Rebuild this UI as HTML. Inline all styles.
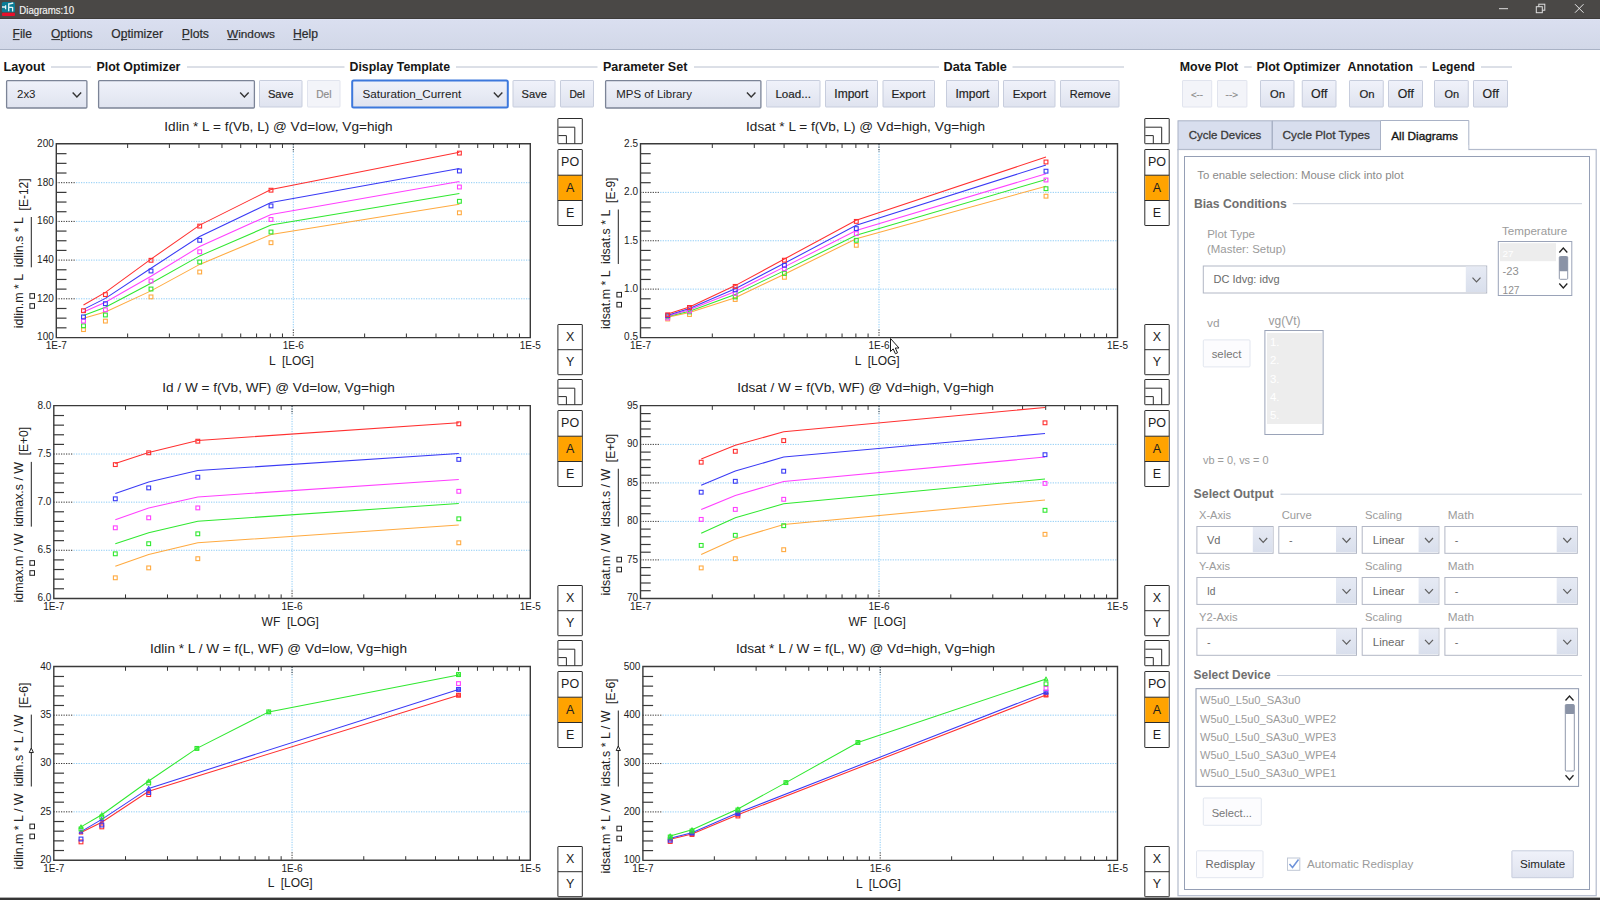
<!DOCTYPE html>
<html><head><meta charset="utf-8"><style>
html,body{margin:0;padding:0;}
body{width:1600px;height:900px;overflow:hidden;position:relative;background:#fff;font-family:"Liberation Sans", sans-serif;}
</style></head><body>
<svg width="1600" height="900" style="position:absolute;left:0;top:0" font-family="Liberation Sans, sans-serif"><defs><linearGradient id="gbtn" x1="0" y1="0" x2="0" y2="1"><stop offset="0" stop-color="#f0f2fa"/><stop offset="1" stop-color="#dfe3ef"/></linearGradient><linearGradient id="gmenu" x1="0" y1="0" x2="0" y2="1"><stop offset="0" stop-color="#dadff0"/><stop offset="1" stop-color="#d2d8e8"/></linearGradient><linearGradient id="gcbtn" x1="0" y1="0" x2="0" y2="1"><stop offset="0" stop-color="#e6eaf4"/><stop offset="1" stop-color="#d9dfec"/></linearGradient></defs><rect x="0" y="0" width="1600" height="18.5" fill="#4a4846"/><rect x="0" y="18" width="1600" height="1" fill="#3e3c3a"/><rect x="1.8" y="2" width="13.2" height="10.3" rx="1.5" fill="#0b7c95"/><rect x="2" y="12.8" width="13" height="3.2" rx="1" fill="#e8102c"/><path d="M2,7 H5 M5.6,5.2 V9.3 M8.7,3.2 V11.2 M8.7,4.2 L13.2,3 M9,7.3 H12.5 M12.6,7 V11.4" stroke="#e8f4f6" stroke-width="1.3" fill="none"/><text x="19.30" y="13.8" font-size="10.4" fill="#f4f4f4" textLength="54.70" lengthAdjust="spacingAndGlyphs" stroke="#f4f4f4" stroke-width="0.15">Diagrams:10</text><line x1="1499" y1="8.7" x2="1508" y2="8.7" stroke="#dedede" stroke-width="1"/><rect x="1538.8" y="4.2" width="6" height="6" fill="none" stroke="#dedede" stroke-width="1"/><rect x="1536.3" y="6.7" width="6" height="6" fill="#4a4846" stroke="#dedede" stroke-width="1"/><path d="M1575,4.2 L1583.5,12.7 M1583.5,4.2 L1575,12.7" stroke="#e8e8e8" stroke-width="1"/><rect x="0" y="19" width="1600" height="30" fill="url(#gmenu)"/><rect x="0" y="19" width="1600" height="1" fill="#dfe4f3"/><rect x="0" y="49" width="1600" height="1" fill="#a9b2c5"/><text x="12.50" y="38.10" font-size="12.10" fill="#2b2b2b" xml:space="preserve" stroke="#2b2b2b" stroke-width="0.2">File</text><line x1="12.8" y1="39.6" x2="19.6" y2="39.6" stroke="#2b2b2b" stroke-width="1"/><text x="51.00" y="38.10" font-size="12.04" fill="#2b2b2b" xml:space="preserve" stroke="#2b2b2b" stroke-width="0.2">Options</text><line x1="51.3" y1="39.6" x2="60.1" y2="39.6" stroke="#2b2b2b" stroke-width="1"/><text x="111.25" y="38.10" font-size="12.10" fill="#2b2b2b" xml:space="preserve" stroke="#2b2b2b" stroke-width="0.2">Optimizer</text><line x1="121.0" y1="39.6" x2="127.1" y2="39.6" stroke="#2b2b2b" stroke-width="1"/><text x="181.75" y="38.10" font-size="12.26" fill="#2b2b2b" xml:space="preserve" stroke="#2b2b2b" stroke-width="0.2">Plots</text><line x1="182.1" y1="39.6" x2="189.6" y2="39.6" stroke="#2b2b2b" stroke-width="1"/><text x="227.00" y="38.10" font-size="11.83" fill="#2b2b2b" xml:space="preserve" stroke="#2b2b2b" stroke-width="0.2">Windows</text><line x1="227.3" y1="39.6" x2="237.9" y2="39.6" stroke="#2b2b2b" stroke-width="1"/><text x="293.00" y="38.10" font-size="12.15" fill="#2b2b2b" xml:space="preserve" stroke="#2b2b2b" stroke-width="0.2">Help</text><line x1="293.3" y1="39.6" x2="301.5" y2="39.6" stroke="#2b2b2b" stroke-width="1"/><text x="3.50" y="71.10" font-size="12.66" font-weight="bold" fill="#161616" xml:space="preserve">Layout</text><text x="96.50" y="71.10" font-size="12.39" font-weight="bold" fill="#161616" xml:space="preserve">Plot Optimizer</text><text x="349.50" y="71.10" font-size="12.33" font-weight="bold" fill="#161616" xml:space="preserve">Display Template</text><text x="603.00" y="71.10" font-size="12.56" font-weight="bold" fill="#161616" xml:space="preserve">Parameter Set</text><text x="943.50" y="71.10" font-size="12.74" font-weight="bold" fill="#161616" xml:space="preserve">Data Table</text><text x="1179.80" y="71.10" font-size="12.39" font-weight="bold" fill="#161616" xml:space="preserve">Move Plot</text><text x="1256.50" y="71.10" font-size="12.39" font-weight="bold" fill="#161616" xml:space="preserve">Plot Optimizer</text><text x="1347.50" y="71.10" font-size="12.41" font-weight="bold" fill="#161616" xml:space="preserve">Annotation</text><text x="1432.00" y="71.10" font-size="12.09" font-weight="bold" fill="#161616" xml:space="preserve">Legend</text><line x1="51" y1="67" x2="91" y2="67" stroke="#b9c0cf" stroke-width="1"/><line x1="187" y1="67" x2="344.5" y2="67" stroke="#b9c0cf" stroke-width="1"/><line x1="456" y1="67" x2="597.5" y2="67" stroke="#b9c0cf" stroke-width="1"/><line x1="694" y1="67" x2="939" y2="67" stroke="#b9c0cf" stroke-width="1"/><line x1="1012.5" y1="67" x2="1124" y2="67" stroke="#b9c0cf" stroke-width="1"/><line x1="1244.2" y1="67" x2="1251.7" y2="67" stroke="#b9c0cf" stroke-width="1"/><line x1="1419.5" y1="67" x2="1427" y2="67" stroke="#b9c0cf" stroke-width="1"/><line x1="1481" y1="67" x2="1512" y2="67" stroke="#b9c0cf" stroke-width="1"/><rect x="6.6" y="80.6" width="80.3" height="27.4" rx="1" fill="url(#gbtn)" stroke="#7c8497" stroke-width="1.3"/><text x="17.00" y="97.90" font-size="11.48" fill="#222" xml:space="preserve">2x3</text><polyline points="72.65,92.45 76.90,96.95 81.15,92.45" fill="none" stroke="#333" stroke-width="1.4"/><rect x="98.6" y="80.6" width="155.8" height="27.4" rx="1" fill="url(#gbtn)" stroke="#7c8497" stroke-width="1.3"/><polyline points="240.15,92.45 244.40,96.95 248.65,92.45" fill="none" stroke="#333" stroke-width="1.4"/><rect x="352.2" y="80.5" width="155.6" height="27" rx="1.5" fill="url(#gbtn)" stroke="#3d78dc" stroke-width="2"/><text x="362.50" y="97.90" font-size="11.69" fill="#222" xml:space="preserve">Saturation_Current</text><polyline points="493.85,92.45 498.10,96.95 502.35,92.45" fill="none" stroke="#333" stroke-width="1.4"/><rect x="605.6" y="80.6" width="155.3" height="27.4" rx="1" fill="url(#gbtn)" stroke="#7c8497" stroke-width="1.3"/><text x="616.25" y="97.90" font-size="11.45" fill="#222" xml:space="preserve">MPS of Library</text><polyline points="746.95,92.45 751.20,96.95 755.45,92.45" fill="none" stroke="#333" stroke-width="1.4"/><rect x="259.5" y="80.5" width="42.5" height="26.5" rx="0.6" fill="url(#gbtn)" stroke="#c7cddd" stroke-width="1"/><text x="267.90" y="98.10" font-size="11.23" fill="#1e1e1e" xml:space="preserve" stroke="#1e1e1e" stroke-width="0.18">Save</text><rect x="307.5" y="80.5" width="32.5" height="26.5" rx="0.6" fill="#f3f4f9" stroke="#e1e4ee" stroke-width="1"/><text x="316.30" y="98.10" font-size="10.13" fill="#8c8c8c" xml:space="preserve" stroke="#8c8c8c" stroke-width="0.18">Del</text><rect x="513.0" y="80.5" width="42.0" height="26.5" rx="0.6" fill="url(#gbtn)" stroke="#c7cddd" stroke-width="1"/><text x="521.60" y="98.10" font-size="11.10" fill="#1e1e1e" xml:space="preserve" stroke="#1e1e1e" stroke-width="0.18">Save</text><rect x="560.5" y="80.5" width="33" height="26.5" rx="0.6" fill="url(#gbtn)" stroke="#c7cddd" stroke-width="1"/><text x="569.40" y="98.10" font-size="10.33" fill="#1e1e1e" xml:space="preserve" stroke="#1e1e1e" stroke-width="0.18">Del</text><rect x="766.5" y="80.5" width="53.5" height="26.5" rx="0.6" fill="url(#gbtn)" stroke="#c7cddd" stroke-width="1"/><text x="775.40" y="98.10" font-size="11.64" fill="#1e1e1e" xml:space="preserve" stroke="#1e1e1e" stroke-width="0.18">Load...</text><rect x="825.5" y="80.5" width="52" height="26.5" rx="0.6" fill="url(#gbtn)" stroke="#c7cddd" stroke-width="1"/><text x="834.30" y="98.10" font-size="12.03" fill="#1e1e1e" xml:space="preserve" stroke="#1e1e1e" stroke-width="0.18">Import</text><rect x="883.0" y="80.5" width="51.5" height="26.5" rx="0.6" fill="url(#gbtn)" stroke="#c7cddd" stroke-width="1"/><text x="891.50" y="98.10" font-size="11.76" fill="#1e1e1e" xml:space="preserve" stroke="#1e1e1e" stroke-width="0.18">Export</text><rect x="946.5" y="80.5" width="52" height="26.5" rx="0.6" fill="url(#gbtn)" stroke="#c7cddd" stroke-width="1"/><text x="955.40" y="98.10" font-size="12.03" fill="#1e1e1e" xml:space="preserve" stroke="#1e1e1e" stroke-width="0.18">Import</text><rect x="1003.5" y="80.5" width="51.5" height="26.5" rx="0.6" fill="url(#gbtn)" stroke="#c7cddd" stroke-width="1"/><text x="1012.80" y="98.10" font-size="11.56" fill="#1e1e1e" xml:space="preserve" stroke="#1e1e1e" stroke-width="0.18">Export</text><rect x="1060.5" y="80.5" width="58.5" height="26.5" rx="0.6" fill="url(#gbtn)" stroke="#c7cddd" stroke-width="1"/><text x="1069.75" y="98.10" font-size="10.97" fill="#1e1e1e" xml:space="preserve" stroke="#1e1e1e" stroke-width="0.18">Remove</text><rect x="1182.5" y="80.5" width="29.200000000000045" height="26.5" rx="0.6" fill="#f3f4f9" stroke="#e1e4ee" stroke-width="1"/><text x="1191.00" y="98.10" font-size="9.60" fill="#8c8c8c" xml:space="preserve" stroke="#8c8c8c" stroke-width="0.18">&lt;--</text><rect x="1217.5" y="80.5" width="29.40000000000009" height="26.5" rx="0.6" fill="#f3f4f9" stroke="#e1e4ee" stroke-width="1"/><text x="1225.60" y="98.10" font-size="9.92" fill="#8c8c8c" xml:space="preserve" stroke="#8c8c8c" stroke-width="0.18">--&gt;</text><rect x="1260.5" y="80.5" width="33.5" height="26.5" rx="0.6" fill="url(#gbtn)" stroke="#c7cddd" stroke-width="1"/><text x="1270.00" y="98.10" font-size="11.24" fill="#1e1e1e" xml:space="preserve" stroke="#1e1e1e" stroke-width="0.18">On</text><rect x="1302.25" y="80.5" width="33.75" height="26.5" rx="0.6" fill="url(#gbtn)" stroke="#c7cddd" stroke-width="1"/><text x="1311.00" y="98.10" font-size="12.44" fill="#1e1e1e" xml:space="preserve" stroke="#1e1e1e" stroke-width="0.18">Off</text><rect x="1349.5" y="80.5" width="33.75" height="26.5" rx="0.6" fill="url(#gbtn)" stroke="#c7cddd" stroke-width="1"/><text x="1359.40" y="98.10" font-size="11.32" fill="#1e1e1e" xml:space="preserve" stroke="#1e1e1e" stroke-width="0.18">On</text><rect x="1388.5" y="80.5" width="34" height="26.5" rx="0.6" fill="url(#gbtn)" stroke="#c7cddd" stroke-width="1"/><text x="1397.80" y="98.10" font-size="12.29" fill="#1e1e1e" xml:space="preserve" stroke="#1e1e1e" stroke-width="0.18">Off</text><rect x="1434.5" y="80.5" width="33.75" height="26.5" rx="0.6" fill="url(#gbtn)" stroke="#c7cddd" stroke-width="1"/><text x="1444.40" y="98.10" font-size="10.94" fill="#1e1e1e" xml:space="preserve" stroke="#1e1e1e" stroke-width="0.18">On</text><rect x="1473.5" y="80.5" width="34" height="26.5" rx="0.6" fill="url(#gbtn)" stroke="#c7cddd" stroke-width="1"/><text x="1482.60" y="98.10" font-size="12.37" fill="#1e1e1e" xml:space="preserve" stroke="#1e1e1e" stroke-width="0.18">Off</text><rect x="557.9" y="118.5" width="24.4" height="25.2" rx="0.4" fill="#fff" stroke="#2c2c2c" stroke-width="1"/><path d="M558.4,127.2 H574.8 V143.7 M558.4,135.6 H566.4 V143.7" fill="none" stroke="#2c2c2c" stroke-width="1"/><rect x="557.9" y="149.5" width="24.4" height="76" rx="0.4" fill="#fff" stroke="#2c2c2c" stroke-width="1"/><rect x="558.4" y="175.2" width="23.4" height="25.3" fill="#ffa300"/><line x1="557.9" y1="175.2" x2="582.3" y2="175.2" stroke="#2c2c2c" stroke-width="1"/><line x1="557.9" y1="200.5" x2="582.3" y2="200.5" stroke="#2c2c2c" stroke-width="1"/><text x="561.07" y="166.20" font-size="12.50" fill="#1e1e1e" xml:space="preserve">PO</text><text x="565.93" y="191.70" font-size="12.50" fill="#1e1e1e" xml:space="preserve">A</text><text x="565.93" y="217.00" font-size="12.50" fill="#1e1e1e" xml:space="preserve">E</text><rect x="557.9" y="324.5" width="24.4" height="50.2" rx="0.4" fill="#fff" stroke="#2c2c2c" stroke-width="1"/><line x1="557.9" y1="349.7" x2="582.3" y2="349.7" stroke="#2c2c2c" stroke-width="1"/><text x="565.93" y="340.60" font-size="12.50" fill="#1e1e1e" xml:space="preserve">X</text><text x="565.93" y="365.60" font-size="12.50" fill="#1e1e1e" xml:space="preserve">Y</text><rect x="557.9" y="379.5" width="24.4" height="25.2" rx="0.4" fill="#fff" stroke="#2c2c2c" stroke-width="1"/><path d="M558.4,388.2 H574.8 V404.7 M558.4,396.6 H566.4 V404.7" fill="none" stroke="#2c2c2c" stroke-width="1"/><rect x="557.9" y="410.5" width="24.4" height="76" rx="0.4" fill="#fff" stroke="#2c2c2c" stroke-width="1"/><rect x="558.4" y="436.2" width="23.4" height="25.3" fill="#ffa300"/><line x1="557.9" y1="436.2" x2="582.3" y2="436.2" stroke="#2c2c2c" stroke-width="1"/><line x1="557.9" y1="461.5" x2="582.3" y2="461.5" stroke="#2c2c2c" stroke-width="1"/><text x="561.07" y="427.20" font-size="12.50" fill="#1e1e1e" xml:space="preserve">PO</text><text x="565.93" y="452.70" font-size="12.50" fill="#1e1e1e" xml:space="preserve">A</text><text x="565.93" y="478.00" font-size="12.50" fill="#1e1e1e" xml:space="preserve">E</text><rect x="557.9" y="585.5" width="24.4" height="50.2" rx="0.4" fill="#fff" stroke="#2c2c2c" stroke-width="1"/><line x1="557.9" y1="610.7" x2="582.3" y2="610.7" stroke="#2c2c2c" stroke-width="1"/><text x="565.93" y="601.60" font-size="12.50" fill="#1e1e1e" xml:space="preserve">X</text><text x="565.93" y="626.60" font-size="12.50" fill="#1e1e1e" xml:space="preserve">Y</text><rect x="557.9" y="640.5" width="24.4" height="25.2" rx="0.4" fill="#fff" stroke="#2c2c2c" stroke-width="1"/><path d="M558.4,649.2 H574.8 V665.7 M558.4,657.6 H566.4 V665.7" fill="none" stroke="#2c2c2c" stroke-width="1"/><rect x="557.9" y="671.5" width="24.4" height="76" rx="0.4" fill="#fff" stroke="#2c2c2c" stroke-width="1"/><rect x="558.4" y="697.2" width="23.4" height="25.3" fill="#ffa300"/><line x1="557.9" y1="697.2" x2="582.3" y2="697.2" stroke="#2c2c2c" stroke-width="1"/><line x1="557.9" y1="722.5" x2="582.3" y2="722.5" stroke="#2c2c2c" stroke-width="1"/><text x="561.07" y="688.20" font-size="12.50" fill="#1e1e1e" xml:space="preserve">PO</text><text x="565.93" y="713.70" font-size="12.50" fill="#1e1e1e" xml:space="preserve">A</text><text x="565.93" y="739.00" font-size="12.50" fill="#1e1e1e" xml:space="preserve">E</text><rect x="557.9" y="846.5" width="24.4" height="50.2" rx="0.4" fill="#fff" stroke="#2c2c2c" stroke-width="1"/><line x1="557.9" y1="871.7" x2="582.3" y2="871.7" stroke="#2c2c2c" stroke-width="1"/><text x="565.93" y="862.60" font-size="12.50" fill="#1e1e1e" xml:space="preserve">X</text><text x="565.93" y="887.60" font-size="12.50" fill="#1e1e1e" xml:space="preserve">Y</text><rect x="1144.8" y="118.5" width="24.4" height="25.2" rx="0.4" fill="#fff" stroke="#2c2c2c" stroke-width="1"/><path d="M1145.3,127.2 H1161.7 V143.7 M1145.3,135.6 H1153.3 V143.7" fill="none" stroke="#2c2c2c" stroke-width="1"/><rect x="1144.8" y="149.5" width="24.4" height="76" rx="0.4" fill="#fff" stroke="#2c2c2c" stroke-width="1"/><rect x="1145.3" y="175.2" width="23.4" height="25.3" fill="#ffa300"/><line x1="1144.8" y1="175.2" x2="1169.2" y2="175.2" stroke="#2c2c2c" stroke-width="1"/><line x1="1144.8" y1="200.5" x2="1169.2" y2="200.5" stroke="#2c2c2c" stroke-width="1"/><text x="1147.97" y="166.20" font-size="12.50" fill="#1e1e1e" xml:space="preserve">PO</text><text x="1152.83" y="191.70" font-size="12.50" fill="#1e1e1e" xml:space="preserve">A</text><text x="1152.83" y="217.00" font-size="12.50" fill="#1e1e1e" xml:space="preserve">E</text><rect x="1144.8" y="324.5" width="24.4" height="50.2" rx="0.4" fill="#fff" stroke="#2c2c2c" stroke-width="1"/><line x1="1144.8" y1="349.7" x2="1169.2" y2="349.7" stroke="#2c2c2c" stroke-width="1"/><text x="1152.83" y="340.60" font-size="12.50" fill="#1e1e1e" xml:space="preserve">X</text><text x="1152.83" y="365.60" font-size="12.50" fill="#1e1e1e" xml:space="preserve">Y</text><rect x="1144.8" y="379.5" width="24.4" height="25.2" rx="0.4" fill="#fff" stroke="#2c2c2c" stroke-width="1"/><path d="M1145.3,388.2 H1161.7 V404.7 M1145.3,396.6 H1153.3 V404.7" fill="none" stroke="#2c2c2c" stroke-width="1"/><rect x="1144.8" y="410.5" width="24.4" height="76" rx="0.4" fill="#fff" stroke="#2c2c2c" stroke-width="1"/><rect x="1145.3" y="436.2" width="23.4" height="25.3" fill="#ffa300"/><line x1="1144.8" y1="436.2" x2="1169.2" y2="436.2" stroke="#2c2c2c" stroke-width="1"/><line x1="1144.8" y1="461.5" x2="1169.2" y2="461.5" stroke="#2c2c2c" stroke-width="1"/><text x="1147.97" y="427.20" font-size="12.50" fill="#1e1e1e" xml:space="preserve">PO</text><text x="1152.83" y="452.70" font-size="12.50" fill="#1e1e1e" xml:space="preserve">A</text><text x="1152.83" y="478.00" font-size="12.50" fill="#1e1e1e" xml:space="preserve">E</text><rect x="1144.8" y="585.5" width="24.4" height="50.2" rx="0.4" fill="#fff" stroke="#2c2c2c" stroke-width="1"/><line x1="1144.8" y1="610.7" x2="1169.2" y2="610.7" stroke="#2c2c2c" stroke-width="1"/><text x="1152.83" y="601.60" font-size="12.50" fill="#1e1e1e" xml:space="preserve">X</text><text x="1152.83" y="626.60" font-size="12.50" fill="#1e1e1e" xml:space="preserve">Y</text><rect x="1144.8" y="640.5" width="24.4" height="25.2" rx="0.4" fill="#fff" stroke="#2c2c2c" stroke-width="1"/><path d="M1145.3,649.2 H1161.7 V665.7 M1145.3,657.6 H1153.3 V665.7" fill="none" stroke="#2c2c2c" stroke-width="1"/><rect x="1144.8" y="671.5" width="24.4" height="76" rx="0.4" fill="#fff" stroke="#2c2c2c" stroke-width="1"/><rect x="1145.3" y="697.2" width="23.4" height="25.3" fill="#ffa300"/><line x1="1144.8" y1="697.2" x2="1169.2" y2="697.2" stroke="#2c2c2c" stroke-width="1"/><line x1="1144.8" y1="722.5" x2="1169.2" y2="722.5" stroke="#2c2c2c" stroke-width="1"/><text x="1147.97" y="688.20" font-size="12.50" fill="#1e1e1e" xml:space="preserve">PO</text><text x="1152.83" y="713.70" font-size="12.50" fill="#1e1e1e" xml:space="preserve">A</text><text x="1152.83" y="739.00" font-size="12.50" fill="#1e1e1e" xml:space="preserve">E</text><rect x="1144.8" y="846.5" width="24.4" height="50.2" rx="0.4" fill="#fff" stroke="#2c2c2c" stroke-width="1"/><line x1="1144.8" y1="871.7" x2="1169.2" y2="871.7" stroke="#2c2c2c" stroke-width="1"/><text x="1152.83" y="862.60" font-size="12.50" fill="#1e1e1e" xml:space="preserve">X</text><text x="1152.83" y="887.60" font-size="12.50" fill="#1e1e1e" xml:space="preserve">Y</text><rect x="1178" y="120.8" width="94" height="29" fill="#d8deee" stroke="#a9b2c6" stroke-width="1"/><rect x="1272.5" y="120.8" width="108" height="29" fill="#d8deee" stroke="#a9b2c6" stroke-width="1"/><text x="1188.70" y="138.60" font-size="11.46" fill="#3a3a3a" xml:space="preserve" stroke="#3a3a3a" stroke-width="0.3">Cycle Devices</text><text x="1282.50" y="138.60" font-size="11.78" fill="#3a3a3a" xml:space="preserve" stroke="#3a3a3a" stroke-width="0.3">Cycle Plot Types</text><rect x="1178" y="149.5" width="418.2" height="746.2" fill="#fff" stroke="#b3bbcc" stroke-width="1.2"/><path d="M1380.5,150 V120.5 H1468.8 V150" fill="#fff" stroke="#a9b2c6" stroke-width="1"/><rect x="1381.2" y="145" width="87" height="6" fill="#fff"/><text x="1391.20" y="139.50" font-size="11.79" fill="#151515" xml:space="preserve" stroke="#151515" stroke-width="0.35">All Diagrams</text><rect x="1184.5" y="156.5" width="405" height="733" fill="#fff" stroke="#959fb5" stroke-width="1"/><text x="1197.20" y="179.40" font-size="11.40" fill="#8a8a8a" xml:space="preserve">To enable selection: Mouse click into plot</text><text x="1193.90" y="207.60" font-size="12.19" font-weight="bold" fill="#707070" xml:space="preserve">Bias Conditions</text><line x1="1292.8" y1="203.7" x2="1582" y2="203.7" stroke="#c9cfdb" stroke-width="1"/><text x="1207.20" y="238.30" font-size="11.52" fill="#9b9b9b" xml:space="preserve">Plot Type</text><text x="1207.00" y="252.80" font-size="11.46" fill="#9b9b9b" xml:space="preserve">(Master: Setup)</text><text x="1502.00" y="234.70" font-size="11.61" fill="#9b9b9b" xml:space="preserve">Temperature</text><rect x="1203.3" y="266.0" width="283.4000000000001" height="27.0" fill="#fff" stroke="#b2b7c5" stroke-width="1"/><rect x="1465.8" y="266.5" width="20.40000000000009" height="25.5" fill="url(#gcbtn)"/><text x="1213.60" y="283.30" font-size="11.01" fill="#6a6a6a" xml:space="preserve">DC Idvg: idvg</text><polyline points="1472.50,277.60 1476.50,281.90 1480.50,277.60" fill="none" stroke="#606060" stroke-width="1.2"/><rect x="1498.3" y="241.5" width="73.5" height="54" fill="#fff" stroke="#9aa3b8" stroke-width="1"/><rect x="1500" y="243.2" width="56" height="18" fill="#ededed"/><text x="1502.50" y="257.00" font-size="9.89" fill="#ffffff" xml:space="preserve">27</text><text x="1502.50" y="275.00" font-size="11.14" fill="#8f8f8f" xml:space="preserve">-23</text><svg x="1498" y="242" width="60" height="53" overflow="hidden"><text x="4.50" y="51.50" font-size="10.19" fill="#8f8f8f" xml:space="preserve">127</text></svg><polyline points="1559.30,252.45 1563.30,247.95 1567.30,252.45" fill="none" stroke="#222" stroke-width="1.3"/><rect x="1559.3" y="256.5" width="8.4" height="22.8" rx="1" fill="#fff" stroke="#8f98ab" stroke-width="1"/><rect x="1559.3" y="256.5" width="8.4" height="14.8" rx="1" fill="#8a93a6"/><polyline points="1559.30,283.55 1563.30,288.05 1567.30,283.55" fill="none" stroke="#222" stroke-width="1.3"/><text x="1207.00" y="327.20" font-size="11.84" fill="#9b9b9b" xml:space="preserve">vd</text><rect x="1203.3" y="339.9" width="46.7" height="27" rx="1" fill="#fcfcfe" stroke="#e2e6ef" stroke-width="1"/><text x="1211.70" y="357.80" font-size="11.37" fill="#777" xml:space="preserve">select</text><text x="1268.60" y="325.00" font-size="12.00" fill="#9b9b9b" xml:space="preserve">vg(Vt)</text><rect x="1264.9" y="330.5" width="58.2" height="104" fill="#fff" stroke="#9aa3b8" stroke-width="1"/><rect x="1267" y="333" width="55" height="91" fill="#ededed"/><text x="1270.00" y="346.00" font-size="11.39" fill="#ffffff" xml:space="preserve">1.</text><text x="1270.00" y="364.30" font-size="11.39" fill="#ffffff" xml:space="preserve">2.</text><text x="1270.00" y="382.60" font-size="11.39" fill="#ffffff" xml:space="preserve">3.</text><text x="1270.00" y="400.90" font-size="11.39" fill="#ffffff" xml:space="preserve">4.</text><text x="1270.00" y="419.20" font-size="11.39" fill="#ffffff" xml:space="preserve">5.</text><text x="1203.00" y="463.60" font-size="10.93" fill="#9b9b9b" xml:space="preserve">vb = 0, vs = 0</text><text x="1193.60" y="498.30" font-size="12.31" font-weight="bold" fill="#707070" xml:space="preserve">Select Output</text><line x1="1280.5" y1="494.2" x2="1582" y2="494.2" stroke="#c9cfdb" stroke-width="1"/><text x="1199.00" y="519.20" font-size="11.08" fill="#9b9b9b" xml:space="preserve">X-Axis</text><text x="1281.70" y="519.20" font-size="11.24" fill="#9b9b9b" xml:space="preserve">Curve</text><text x="1365.00" y="519.20" font-size="11.28" fill="#9b9b9b" xml:space="preserve">Scaling</text><text x="1447.80" y="519.20" font-size="11.79" fill="#9b9b9b" xml:space="preserve">Math</text><rect x="1196.9" y="526.5" width="76.19999999999982" height="26.799999999999955" fill="#fff" stroke="#b2b7c5" stroke-width="1"/><rect x="1252.8" y="527" width="19.799999999999955" height="25.299999999999955" fill="url(#gcbtn)"/><text x="1207.00" y="544.20" font-size="11.04" fill="#6a6a6a" xml:space="preserve">Vd</text><polyline points="1259.20,538.00 1263.20,542.30 1267.20,538.00" fill="none" stroke="#606060" stroke-width="1.2"/><rect x="1278.8" y="526.5" width="77.70000000000005" height="26.799999999999955" fill="#fff" stroke="#b2b7c5" stroke-width="1"/><rect x="1336" y="527" width="20" height="25.299999999999955" fill="url(#gcbtn)"/><text x="1288.90" y="544.20" font-size="10.81" fill="#6a6a6a" xml:space="preserve">-</text><polyline points="1342.50,538.00 1346.50,542.30 1350.50,538.00" fill="none" stroke="#606060" stroke-width="1.2"/><rect x="1362.2" y="526.5" width="76.70000000000005" height="26.799999999999955" fill="#fff" stroke="#b2b7c5" stroke-width="1"/><rect x="1418.6" y="527" width="19.800000000000182" height="25.299999999999955" fill="url(#gcbtn)"/><text x="1372.80" y="544.20" font-size="11.47" fill="#6a6a6a" xml:space="preserve">Linear</text><polyline points="1425.00,538.00 1429.00,542.30 1433.00,538.00" fill="none" stroke="#606060" stroke-width="1.2"/><rect x="1444.9" y="526.5" width="132.39999999999986" height="26.799999999999955" fill="#fff" stroke="#b2b7c5" stroke-width="1"/><rect x="1556.7" y="527" width="20.09999999999991" height="25.299999999999955" fill="url(#gcbtn)"/><text x="1454.70" y="544.20" font-size="10.81" fill="#6a6a6a" xml:space="preserve">-</text><polyline points="1563.25,538.00 1567.25,542.30 1571.25,538.00" fill="none" stroke="#606060" stroke-width="1.2"/><text x="1199.00" y="570.00" font-size="11.08" fill="#9b9b9b" xml:space="preserve">Y-Axis</text><text x="1365.00" y="570.00" font-size="11.28" fill="#9b9b9b" xml:space="preserve">Scaling</text><text x="1447.80" y="570.00" font-size="11.79" fill="#9b9b9b" xml:space="preserve">Math</text><rect x="1196.9" y="577.5" width="159.5999999999999" height="26.899999999999977" fill="#fff" stroke="#b2b7c5" stroke-width="1"/><rect x="1336" y="578" width="20" height="25.399999999999977" fill="url(#gcbtn)"/><text x="1207.00" y="595.00" font-size="10.19" fill="#6a6a6a" xml:space="preserve">Id</text><polyline points="1342.50,589.05 1346.50,593.35 1350.50,589.05" fill="none" stroke="#606060" stroke-width="1.2"/><rect x="1362.2" y="577.5" width="76.70000000000005" height="26.899999999999977" fill="#fff" stroke="#b2b7c5" stroke-width="1"/><rect x="1418.6" y="578" width="19.800000000000182" height="25.399999999999977" fill="url(#gcbtn)"/><text x="1372.80" y="595.00" font-size="11.47" fill="#6a6a6a" xml:space="preserve">Linear</text><polyline points="1425.00,589.05 1429.00,593.35 1433.00,589.05" fill="none" stroke="#606060" stroke-width="1.2"/><rect x="1444.9" y="577.5" width="132.39999999999986" height="26.899999999999977" fill="#fff" stroke="#b2b7c5" stroke-width="1"/><rect x="1556.7" y="578" width="20.09999999999991" height="25.399999999999977" fill="url(#gcbtn)"/><text x="1454.70" y="595.00" font-size="10.81" fill="#6a6a6a" xml:space="preserve">-</text><polyline points="1563.25,589.05 1567.25,593.35 1571.25,589.05" fill="none" stroke="#606060" stroke-width="1.2"/><text x="1199.00" y="621.10" font-size="11.18" fill="#9b9b9b" xml:space="preserve">Y2-Axis</text><text x="1365.00" y="621.10" font-size="11.28" fill="#9b9b9b" xml:space="preserve">Scaling</text><text x="1447.80" y="621.10" font-size="11.79" fill="#9b9b9b" xml:space="preserve">Math</text><rect x="1196.9" y="628.3" width="159.5999999999999" height="27.0" fill="#fff" stroke="#b2b7c5" stroke-width="1"/><rect x="1336" y="628.8" width="20" height="25.5" fill="url(#gcbtn)"/><text x="1207.00" y="645.60" font-size="10.81" fill="#6a6a6a" xml:space="preserve">-</text><polyline points="1342.50,639.90 1346.50,644.20 1350.50,639.90" fill="none" stroke="#606060" stroke-width="1.2"/><rect x="1362.2" y="628.3" width="76.70000000000005" height="27.0" fill="#fff" stroke="#b2b7c5" stroke-width="1"/><rect x="1418.6" y="628.8" width="19.800000000000182" height="25.5" fill="url(#gcbtn)"/><text x="1372.80" y="645.60" font-size="11.47" fill="#6a6a6a" xml:space="preserve">Linear</text><polyline points="1425.00,639.90 1429.00,644.20 1433.00,639.90" fill="none" stroke="#606060" stroke-width="1.2"/><rect x="1444.9" y="628.3" width="132.39999999999986" height="27.0" fill="#fff" stroke="#b2b7c5" stroke-width="1"/><rect x="1556.7" y="628.8" width="20.09999999999991" height="25.5" fill="url(#gcbtn)"/><text x="1454.70" y="645.60" font-size="10.81" fill="#6a6a6a" xml:space="preserve">-</text><polyline points="1563.25,639.90 1567.25,644.20 1571.25,639.90" fill="none" stroke="#606060" stroke-width="1.2"/><text x="1193.60" y="679.40" font-size="11.94" font-weight="bold" fill="#707070" xml:space="preserve">Select Device</text><line x1="1277" y1="675.5" x2="1582" y2="675.5" stroke="#c9cfdb" stroke-width="1"/><rect x="1196" y="688.7" width="382.6" height="97.7" fill="#fff" stroke="#8d97ad" stroke-width="1"/><text x="1200.10" y="704.40" font-size="11.22" fill="#9b9b9b" xml:space="preserve">W5u0_L5u0_SA3u0</text><text x="1200.10" y="722.65" font-size="11.02" fill="#9b9b9b" xml:space="preserve">W5u0_L5u0_SA3u0_WPE2</text><text x="1200.10" y="740.90" font-size="11.02" fill="#9b9b9b" xml:space="preserve">W5u0_L5u0_SA3u0_WPE3</text><text x="1200.10" y="759.15" font-size="11.02" fill="#9b9b9b" xml:space="preserve">W5u0_L5u0_SA3u0_WPE4</text><text x="1200.10" y="777.40" font-size="11.02" fill="#9b9b9b" xml:space="preserve">W5u0_L5u0_SA3u0_WPE1</text><polyline points="1565.50,700.55 1569.50,696.05 1573.50,700.55" fill="none" stroke="#222" stroke-width="1.3"/><rect x="1565.3" y="704.5" width="9" height="66.5" rx="1" fill="#fff" stroke="#8f98ab" stroke-width="1"/><rect x="1565.3" y="704.5" width="9" height="9.5" rx="1" fill="#8a93a6"/><polyline points="1565.50,775.25 1569.50,779.75 1573.50,775.25" fill="none" stroke="#222" stroke-width="1.3"/><rect x="1203.3" y="798" width="58" height="27.3" rx="1" fill="#fcfcfe" stroke="#e2e6ef" stroke-width="1"/><text x="1211.70" y="816.50" font-size="11.15" fill="#777" xml:space="preserve">Select...</text><rect x="1196.5" y="850.8" width="66.5" height="26.9" rx="1" fill="#fcfcfe" stroke="#e2e6ef" stroke-width="1"/><text x="1205.50" y="868.40" font-size="11.27" fill="#6a6a6a" xml:space="preserve">Redisplay</text><rect x="1287.5" y="858" width="12.3" height="12.3" fill="#fff" stroke="#c0c7d5" stroke-width="1"/><polyline points="1289.5,864 1292.5,867.5 1298.5,859.5" fill="none" stroke="#6f93da" stroke-width="1.5"/><text x="1307.00" y="868.40" font-size="11.66" fill="#9b9b9b" xml:space="preserve">Automatic Redisplay</text><rect x="1511.9" y="850.8" width="61.4" height="26.9" rx="0.5" fill="url(#gbtn)" stroke="#c7cddd" stroke-width="1"/><text x="1520.00" y="868.40" font-size="11.62" fill="#222" xml:space="preserve">Simulate</text><rect x="0" y="897.6" width="1600" height="2.4" fill="#363636"/><line x1="56" y1="327.82" x2="66.5" y2="327.82" stroke="#3a3a3a" stroke-width="1.2"/><line x1="56" y1="318.15" x2="66.5" y2="318.15" stroke="#3a3a3a" stroke-width="1.2"/><line x1="56" y1="308.48" x2="66.5" y2="308.48" stroke="#3a3a3a" stroke-width="1.2"/><text x="53.8" y="340.40" text-anchor="end" font-size="10" fill="#222">100</text><line x1="76" y1="298.80" x2="530" y2="298.80" stroke="#8ccbf5" stroke-width="1" stroke-dasharray="1.25,1.25"/><line x1="56" y1="298.80" x2="76" y2="298.80" stroke="#333" stroke-width="1" stroke-dasharray="1.25,1.25"/><line x1="56" y1="289.12" x2="66.5" y2="289.12" stroke="#3a3a3a" stroke-width="1.2"/><line x1="56" y1="279.45" x2="66.5" y2="279.45" stroke="#3a3a3a" stroke-width="1.2"/><line x1="56" y1="269.78" x2="66.5" y2="269.78" stroke="#3a3a3a" stroke-width="1.2"/><text x="53.8" y="301.70" text-anchor="end" font-size="10" fill="#222">120</text><line x1="76" y1="260.10" x2="530" y2="260.10" stroke="#8ccbf5" stroke-width="1" stroke-dasharray="1.25,1.25"/><line x1="56" y1="260.10" x2="76" y2="260.10" stroke="#333" stroke-width="1" stroke-dasharray="1.25,1.25"/><line x1="56" y1="250.43" x2="66.5" y2="250.43" stroke="#3a3a3a" stroke-width="1.2"/><line x1="56" y1="240.75" x2="66.5" y2="240.75" stroke="#3a3a3a" stroke-width="1.2"/><line x1="56" y1="231.08" x2="66.5" y2="231.08" stroke="#3a3a3a" stroke-width="1.2"/><text x="53.8" y="263.00" text-anchor="end" font-size="10" fill="#222">140</text><line x1="76" y1="221.40" x2="530" y2="221.40" stroke="#8ccbf5" stroke-width="1" stroke-dasharray="1.25,1.25"/><line x1="56" y1="221.40" x2="76" y2="221.40" stroke="#333" stroke-width="1" stroke-dasharray="1.25,1.25"/><line x1="56" y1="211.72" x2="66.5" y2="211.72" stroke="#3a3a3a" stroke-width="1.2"/><line x1="56" y1="202.05" x2="66.5" y2="202.05" stroke="#3a3a3a" stroke-width="1.2"/><line x1="56" y1="192.38" x2="66.5" y2="192.38" stroke="#3a3a3a" stroke-width="1.2"/><text x="53.8" y="224.30" text-anchor="end" font-size="10" fill="#222">160</text><line x1="76" y1="182.70" x2="530" y2="182.70" stroke="#8ccbf5" stroke-width="1" stroke-dasharray="1.25,1.25"/><line x1="56" y1="182.70" x2="76" y2="182.70" stroke="#333" stroke-width="1" stroke-dasharray="1.25,1.25"/><line x1="56" y1="173.02" x2="66.5" y2="173.02" stroke="#3a3a3a" stroke-width="1.2"/><line x1="56" y1="163.35" x2="66.5" y2="163.35" stroke="#3a3a3a" stroke-width="1.2"/><line x1="56" y1="153.67" x2="66.5" y2="153.67" stroke="#3a3a3a" stroke-width="1.2"/><text x="53.8" y="185.60" text-anchor="end" font-size="10" fill="#222">180</text><text x="53.8" y="146.90" text-anchor="end" font-size="10" fill="#222">200</text><line x1="293.30" y1="144" x2="293.30" y2="329.5" stroke="#8ccbf5" stroke-width="1" stroke-dasharray="1.25,1.25"/><line x1="293.30" y1="329.5" x2="293.30" y2="337.5" stroke="#333" stroke-width="1" stroke-dasharray="1.25,1.25"/><line x1="293.30" y1="144" x2="293.30" y2="152" stroke="#333" stroke-width="1" stroke-dasharray="1.25,1.25"/><line x1="127.64" y1="144" x2="127.64" y2="148" stroke="#333" stroke-width="1"/><line x1="127.64" y1="333.5" x2="127.64" y2="337.5" stroke="#333" stroke-width="1"/><line x1="169.38" y1="144" x2="169.38" y2="148" stroke="#333" stroke-width="1"/><line x1="169.38" y1="333.5" x2="169.38" y2="337.5" stroke="#333" stroke-width="1"/><line x1="198.99" y1="144" x2="198.99" y2="148" stroke="#333" stroke-width="1"/><line x1="198.99" y1="333.5" x2="198.99" y2="337.5" stroke="#333" stroke-width="1"/><line x1="221.96" y1="144" x2="221.96" y2="148" stroke="#333" stroke-width="1"/><line x1="221.96" y1="333.5" x2="221.96" y2="337.5" stroke="#333" stroke-width="1"/><line x1="240.72" y1="144" x2="240.72" y2="148" stroke="#333" stroke-width="1"/><line x1="240.72" y1="333.5" x2="240.72" y2="337.5" stroke="#333" stroke-width="1"/><line x1="256.59" y1="144" x2="256.59" y2="148" stroke="#333" stroke-width="1"/><line x1="256.59" y1="333.5" x2="256.59" y2="337.5" stroke="#333" stroke-width="1"/><line x1="270.33" y1="144" x2="270.33" y2="148" stroke="#333" stroke-width="1"/><line x1="270.33" y1="333.5" x2="270.33" y2="337.5" stroke="#333" stroke-width="1"/><line x1="282.46" y1="144" x2="282.46" y2="148" stroke="#333" stroke-width="1"/><line x1="282.46" y1="333.5" x2="282.46" y2="337.5" stroke="#333" stroke-width="1"/><line x1="364.64" y1="144" x2="364.64" y2="148" stroke="#333" stroke-width="1"/><line x1="364.64" y1="333.5" x2="364.64" y2="337.5" stroke="#333" stroke-width="1"/><line x1="406.38" y1="144" x2="406.38" y2="148" stroke="#333" stroke-width="1"/><line x1="406.38" y1="333.5" x2="406.38" y2="337.5" stroke="#333" stroke-width="1"/><line x1="435.99" y1="144" x2="435.99" y2="148" stroke="#333" stroke-width="1"/><line x1="435.99" y1="333.5" x2="435.99" y2="337.5" stroke="#333" stroke-width="1"/><line x1="458.96" y1="144" x2="458.96" y2="148" stroke="#333" stroke-width="1"/><line x1="458.96" y1="333.5" x2="458.96" y2="337.5" stroke="#333" stroke-width="1"/><line x1="477.72" y1="144" x2="477.72" y2="148" stroke="#333" stroke-width="1"/><line x1="477.72" y1="333.5" x2="477.72" y2="337.5" stroke="#333" stroke-width="1"/><line x1="493.59" y1="144" x2="493.59" y2="148" stroke="#333" stroke-width="1"/><line x1="493.59" y1="333.5" x2="493.59" y2="337.5" stroke="#333" stroke-width="1"/><line x1="507.33" y1="144" x2="507.33" y2="148" stroke="#333" stroke-width="1"/><line x1="507.33" y1="333.5" x2="507.33" y2="337.5" stroke="#333" stroke-width="1"/><line x1="519.46" y1="144" x2="519.46" y2="148" stroke="#333" stroke-width="1"/><line x1="519.46" y1="333.5" x2="519.46" y2="337.5" stroke="#333" stroke-width="1"/><text x="56.30" y="349.30" text-anchor="middle" font-size="10" fill="#222">1E-7</text><text x="293.30" y="349.30" text-anchor="middle" font-size="10" fill="#222">1E-6</text><text x="530.30" y="349.30" text-anchor="middle" font-size="10" fill="#222">1E-5</text><path d="M56.3,143.75 H530.3 V337.6 H56.3 Z" fill="none" stroke="#3a3a3a" stroke-width="1.4"/><text x="278.5" y="131" text-anchor="middle" font-size="13.6" fill="#222">Idlin * L = f(Vb, L) @ Vd=low, Vg=high</text><text x="291.50" y="364.70" text-anchor="middle" font-size="12" fill="#222" xml:space="preserve">L  [LOG]</text><text transform="translate(23,328.19) rotate(-90)" font-size="12.4" fill="#222" xml:space="preserve">idlin.m * L  idlin.s * L<tspan dy="5" font-size="12">  [E-12]</tspan></text><rect x="29.90" y="293.66" width="4.6" height="4.6" fill="none" stroke="#222" stroke-width="1"/><rect x="29.90" y="303.66" width="4.6" height="4.6" fill="none" stroke="#222" stroke-width="1"/><line x1="31.3" y1="267.31" x2="31.3" y2="217.00" stroke="#222" stroke-width="1"/><polyline points="83.5,318.3 105.4,312.0 151.0,290.9 199.7,264.4 271.0,234.6 459.4,204.2" fill="none" stroke="#ffaa40" stroke-width="1.05"/><rect x="81.6" y="327.7" width="3.8" height="3.8" fill="none" stroke="#ffaa40" stroke-width="1.1"/><rect x="103.5" y="319.2" width="3.8" height="3.8" fill="none" stroke="#ffaa40" stroke-width="1.1"/><rect x="149.1" y="295.0" width="3.8" height="3.8" fill="none" stroke="#ffaa40" stroke-width="1.1"/><rect x="197.8" y="270.1" width="3.8" height="3.8" fill="none" stroke="#ffaa40" stroke-width="1.1"/><rect x="269.1" y="240.8" width="3.8" height="3.8" fill="none" stroke="#ffaa40" stroke-width="1.1"/><rect x="457.5" y="210.9" width="3.8" height="3.8" fill="none" stroke="#ffaa40" stroke-width="1.1"/><polyline points="83.5,315.4 105.4,307.3 151.0,283.3 199.7,255.9 271.0,225.1 459.4,193.5" fill="none" stroke="#30e830" stroke-width="1.05"/><rect x="81.6" y="323.9" width="3.8" height="3.8" fill="none" stroke="#30e830" stroke-width="1.1"/><rect x="103.5" y="313.1" width="3.8" height="3.8" fill="none" stroke="#30e830" stroke-width="1.1"/><rect x="149.1" y="287.1" width="3.8" height="3.8" fill="none" stroke="#30e830" stroke-width="1.1"/><rect x="197.8" y="260.1" width="3.8" height="3.8" fill="none" stroke="#30e830" stroke-width="1.1"/><rect x="269.1" y="230.1" width="3.8" height="3.8" fill="none" stroke="#30e830" stroke-width="1.1"/><rect x="457.5" y="199.4" width="3.8" height="3.8" fill="none" stroke="#30e830" stroke-width="1.1"/><polyline points="83.5,312.0 105.4,302.2 151.0,276.3 199.7,246.5 271.0,214.4 459.4,181.6" fill="none" stroke="#ff40ff" stroke-width="1.05"/><rect x="81.6" y="319.2" width="3.8" height="3.8" fill="none" stroke="#ff40ff" stroke-width="1.1"/><rect x="103.5" y="307.9" width="3.8" height="3.8" fill="none" stroke="#ff40ff" stroke-width="1.1"/><rect x="149.1" y="279.1" width="3.8" height="3.8" fill="none" stroke="#ff40ff" stroke-width="1.1"/><rect x="197.8" y="249.9" width="3.8" height="3.8" fill="none" stroke="#ff40ff" stroke-width="1.1"/><rect x="269.1" y="217.6" width="3.8" height="3.8" fill="none" stroke="#ff40ff" stroke-width="1.1"/><rect x="457.5" y="185.1" width="3.8" height="3.8" fill="none" stroke="#ff40ff" stroke-width="1.1"/><polyline points="83.5,309.4 105.4,298.4 151.0,268.2 199.7,236.5 271.0,202.5 459.4,168.5" fill="none" stroke="#3a3af5" stroke-width="1.05"/><rect x="81.6" y="315.0" width="3.8" height="3.8" fill="none" stroke="#3a3af5" stroke-width="1.1"/><rect x="103.5" y="301.8" width="3.8" height="3.8" fill="none" stroke="#3a3af5" stroke-width="1.1"/><rect x="149.1" y="269.1" width="3.8" height="3.8" fill="none" stroke="#3a3af5" stroke-width="1.1"/><rect x="197.8" y="238.4" width="3.8" height="3.8" fill="none" stroke="#3a3af5" stroke-width="1.1"/><rect x="269.1" y="204.0" width="3.8" height="3.8" fill="none" stroke="#3a3af5" stroke-width="1.1"/><rect x="457.5" y="169.1" width="3.8" height="3.8" fill="none" stroke="#3a3af5" stroke-width="1.1"/><polyline points="83.5,305.0 105.4,292.4 151.0,259.1 199.7,225.1 271.0,189.5 459.4,152.2" fill="none" stroke="#ff3030" stroke-width="1.05"/><rect x="81.6" y="308.8" width="3.8" height="3.8" fill="none" stroke="#ff3030" stroke-width="1.1"/><rect x="103.5" y="292.7" width="3.8" height="3.8" fill="none" stroke="#ff3030" stroke-width="1.1"/><rect x="149.1" y="258.4" width="3.8" height="3.8" fill="none" stroke="#ff3030" stroke-width="1.1"/><rect x="197.8" y="224.2" width="3.8" height="3.8" fill="none" stroke="#ff3030" stroke-width="1.1"/><rect x="269.1" y="188.3" width="3.8" height="3.8" fill="none" stroke="#ff3030" stroke-width="1.1"/><rect x="457.5" y="151.2" width="3.8" height="3.8" fill="none" stroke="#ff3030" stroke-width="1.1"/><line x1="640.2" y1="327.82" x2="650.7" y2="327.82" stroke="#3a3a3a" stroke-width="1.2"/><line x1="640.2" y1="318.15" x2="650.7" y2="318.15" stroke="#3a3a3a" stroke-width="1.2"/><line x1="640.2" y1="308.48" x2="650.7" y2="308.48" stroke="#3a3a3a" stroke-width="1.2"/><line x1="640.2" y1="298.80" x2="650.7" y2="298.80" stroke="#3a3a3a" stroke-width="1.2"/><text x="638.0" y="340.40" text-anchor="end" font-size="10" fill="#222">0.5</text><line x1="660.2" y1="289.12" x2="1117.2" y2="289.12" stroke="#8ccbf5" stroke-width="1" stroke-dasharray="1.25,1.25"/><line x1="640.2" y1="289.12" x2="660.2" y2="289.12" stroke="#333" stroke-width="1" stroke-dasharray="1.25,1.25"/><line x1="640.2" y1="279.45" x2="650.7" y2="279.45" stroke="#3a3a3a" stroke-width="1.2"/><line x1="640.2" y1="269.77" x2="650.7" y2="269.77" stroke="#3a3a3a" stroke-width="1.2"/><line x1="640.2" y1="260.10" x2="650.7" y2="260.10" stroke="#3a3a3a" stroke-width="1.2"/><line x1="640.2" y1="250.43" x2="650.7" y2="250.43" stroke="#3a3a3a" stroke-width="1.2"/><text x="638.0" y="292.02" text-anchor="end" font-size="10" fill="#222">1.0</text><line x1="660.2" y1="240.75" x2="1117.2" y2="240.75" stroke="#8ccbf5" stroke-width="1" stroke-dasharray="1.25,1.25"/><line x1="640.2" y1="240.75" x2="660.2" y2="240.75" stroke="#333" stroke-width="1" stroke-dasharray="1.25,1.25"/><line x1="640.2" y1="231.07" x2="650.7" y2="231.07" stroke="#3a3a3a" stroke-width="1.2"/><line x1="640.2" y1="221.40" x2="650.7" y2="221.40" stroke="#3a3a3a" stroke-width="1.2"/><line x1="640.2" y1="211.72" x2="650.7" y2="211.72" stroke="#3a3a3a" stroke-width="1.2"/><line x1="640.2" y1="202.05" x2="650.7" y2="202.05" stroke="#3a3a3a" stroke-width="1.2"/><text x="638.0" y="243.65" text-anchor="end" font-size="10" fill="#222">1.5</text><line x1="660.2" y1="192.38" x2="1117.2" y2="192.38" stroke="#8ccbf5" stroke-width="1" stroke-dasharray="1.25,1.25"/><line x1="640.2" y1="192.38" x2="660.2" y2="192.38" stroke="#333" stroke-width="1" stroke-dasharray="1.25,1.25"/><line x1="640.2" y1="182.70" x2="650.7" y2="182.70" stroke="#3a3a3a" stroke-width="1.2"/><line x1="640.2" y1="173.03" x2="650.7" y2="173.03" stroke="#3a3a3a" stroke-width="1.2"/><line x1="640.2" y1="163.35" x2="650.7" y2="163.35" stroke="#3a3a3a" stroke-width="1.2"/><line x1="640.2" y1="153.68" x2="650.7" y2="153.68" stroke="#3a3a3a" stroke-width="1.2"/><text x="638.0" y="195.28" text-anchor="end" font-size="10" fill="#222">2.0</text><text x="638.0" y="146.90" text-anchor="end" font-size="10" fill="#222">2.5</text><line x1="879.00" y1="144" x2="879.00" y2="329.5" stroke="#8ccbf5" stroke-width="1" stroke-dasharray="1.25,1.25"/><line x1="879.00" y1="329.5" x2="879.00" y2="337.5" stroke="#333" stroke-width="1" stroke-dasharray="1.25,1.25"/><line x1="879.00" y1="144" x2="879.00" y2="152" stroke="#333" stroke-width="1" stroke-dasharray="1.25,1.25"/><line x1="712.30" y1="144" x2="712.30" y2="148" stroke="#333" stroke-width="1"/><line x1="712.30" y1="333.5" x2="712.30" y2="337.5" stroke="#333" stroke-width="1"/><line x1="754.29" y1="144" x2="754.29" y2="148" stroke="#333" stroke-width="1"/><line x1="754.29" y1="333.5" x2="754.29" y2="337.5" stroke="#333" stroke-width="1"/><line x1="784.09" y1="144" x2="784.09" y2="148" stroke="#333" stroke-width="1"/><line x1="784.09" y1="333.5" x2="784.09" y2="337.5" stroke="#333" stroke-width="1"/><line x1="807.20" y1="144" x2="807.20" y2="148" stroke="#333" stroke-width="1"/><line x1="807.20" y1="333.5" x2="807.20" y2="337.5" stroke="#333" stroke-width="1"/><line x1="826.09" y1="144" x2="826.09" y2="148" stroke="#333" stroke-width="1"/><line x1="826.09" y1="333.5" x2="826.09" y2="337.5" stroke="#333" stroke-width="1"/><line x1="842.06" y1="144" x2="842.06" y2="148" stroke="#333" stroke-width="1"/><line x1="842.06" y1="333.5" x2="842.06" y2="337.5" stroke="#333" stroke-width="1"/><line x1="855.89" y1="144" x2="855.89" y2="148" stroke="#333" stroke-width="1"/><line x1="855.89" y1="333.5" x2="855.89" y2="337.5" stroke="#333" stroke-width="1"/><line x1="868.09" y1="144" x2="868.09" y2="148" stroke="#333" stroke-width="1"/><line x1="868.09" y1="333.5" x2="868.09" y2="337.5" stroke="#333" stroke-width="1"/><line x1="950.80" y1="144" x2="950.80" y2="148" stroke="#333" stroke-width="1"/><line x1="950.80" y1="333.5" x2="950.80" y2="337.5" stroke="#333" stroke-width="1"/><line x1="992.79" y1="144" x2="992.79" y2="148" stroke="#333" stroke-width="1"/><line x1="992.79" y1="333.5" x2="992.79" y2="337.5" stroke="#333" stroke-width="1"/><line x1="1022.59" y1="144" x2="1022.59" y2="148" stroke="#333" stroke-width="1"/><line x1="1022.59" y1="333.5" x2="1022.59" y2="337.5" stroke="#333" stroke-width="1"/><line x1="1045.70" y1="144" x2="1045.70" y2="148" stroke="#333" stroke-width="1"/><line x1="1045.70" y1="333.5" x2="1045.70" y2="337.5" stroke="#333" stroke-width="1"/><line x1="1064.59" y1="144" x2="1064.59" y2="148" stroke="#333" stroke-width="1"/><line x1="1064.59" y1="333.5" x2="1064.59" y2="337.5" stroke="#333" stroke-width="1"/><line x1="1080.56" y1="144" x2="1080.56" y2="148" stroke="#333" stroke-width="1"/><line x1="1080.56" y1="333.5" x2="1080.56" y2="337.5" stroke="#333" stroke-width="1"/><line x1="1094.39" y1="144" x2="1094.39" y2="148" stroke="#333" stroke-width="1"/><line x1="1094.39" y1="333.5" x2="1094.39" y2="337.5" stroke="#333" stroke-width="1"/><line x1="1106.59" y1="144" x2="1106.59" y2="148" stroke="#333" stroke-width="1"/><line x1="1106.59" y1="333.5" x2="1106.59" y2="337.5" stroke="#333" stroke-width="1"/><text x="640.50" y="349.30" text-anchor="middle" font-size="10" fill="#222">1E-7</text><text x="879.00" y="349.30" text-anchor="middle" font-size="10" fill="#222">1E-6</text><text x="1117.50" y="349.30" text-anchor="middle" font-size="10" fill="#222">1E-5</text><path d="M640.5,143.75 H1117.5 V337.6 H640.5 Z" fill="none" stroke="#3a3a3a" stroke-width="1.4"/><text x="865.5" y="131" text-anchor="middle" font-size="13.6" fill="#222">Idsat * L = f(Vb, L) @ Vd=high, Vg=high</text><text x="877.20" y="364.70" text-anchor="middle" font-size="12" fill="#222" xml:space="preserve">L  [LOG]</text><text transform="translate(610,328.98) rotate(-90)" font-size="12.4" fill="#222" xml:space="preserve">idsat.m * L  idsat.s * L<tspan dy="5" font-size="12">  [E-9]</tspan></text><rect x="616.90" y="292.39" width="4.6" height="4.6" fill="none" stroke="#222" stroke-width="1"/><rect x="616.90" y="302.39" width="4.6" height="4.6" fill="none" stroke="#222" stroke-width="1"/><line x1="618.3" y1="263.98" x2="618.3" y2="209.53" stroke="#222" stroke-width="1"/><polyline points="667.7,317.2 689.5,312.5 735.2,297.7 784.4,274.2 856.2,238.8 1046.0,186.2" fill="none" stroke="#ffaa40" stroke-width="1.05"/><rect x="665.8" y="317.1" width="3.8" height="3.8" fill="none" stroke="#ffaa40" stroke-width="1.1"/><rect x="687.6" y="312.6" width="3.8" height="3.8" fill="none" stroke="#ffaa40" stroke-width="1.1"/><rect x="733.3" y="297.6" width="3.8" height="3.8" fill="none" stroke="#ffaa40" stroke-width="1.1"/><rect x="782.5" y="275.4" width="3.8" height="3.8" fill="none" stroke="#ffaa40" stroke-width="1.1"/><rect x="854.4" y="243.4" width="3.8" height="3.8" fill="none" stroke="#ffaa40" stroke-width="1.1"/><rect x="1044.1" y="194.3" width="3.8" height="3.8" fill="none" stroke="#ffaa40" stroke-width="1.1"/><polyline points="667.7,316.4 689.5,311.2 735.2,294.5 784.4,270.6 856.2,235.2 1046.0,179.5" fill="none" stroke="#30e830" stroke-width="1.05"/><rect x="665.8" y="315.0" width="3.8" height="3.8" fill="none" stroke="#30e830" stroke-width="1.1"/><rect x="687.6" y="310.0" width="3.8" height="3.8" fill="none" stroke="#30e830" stroke-width="1.1"/><rect x="733.3" y="295.0" width="3.8" height="3.8" fill="none" stroke="#30e830" stroke-width="1.1"/><rect x="782.5" y="271.5" width="3.8" height="3.8" fill="none" stroke="#30e830" stroke-width="1.1"/><rect x="854.4" y="238.4" width="3.8" height="3.8" fill="none" stroke="#30e830" stroke-width="1.1"/><rect x="1044.1" y="186.8" width="3.8" height="3.8" fill="none" stroke="#30e830" stroke-width="1.1"/><polyline points="667.7,316.0 689.5,309.8 735.2,291.4 784.4,266.9 856.2,230.5 1046.0,173.8" fill="none" stroke="#ff40ff" stroke-width="1.05"/><rect x="665.8" y="316.1" width="3.8" height="3.8" fill="none" stroke="#ff40ff" stroke-width="1.1"/><rect x="687.6" y="309.1" width="3.8" height="3.8" fill="none" stroke="#ff40ff" stroke-width="1.1"/><rect x="733.3" y="291.5" width="3.8" height="3.8" fill="none" stroke="#ff40ff" stroke-width="1.1"/><rect x="782.5" y="266.9" width="3.8" height="3.8" fill="none" stroke="#ff40ff" stroke-width="1.1"/><rect x="854.4" y="231.7" width="3.8" height="3.8" fill="none" stroke="#ff40ff" stroke-width="1.1"/><rect x="1044.1" y="178.1" width="3.8" height="3.8" fill="none" stroke="#ff40ff" stroke-width="1.1"/><polyline points="667.7,315.2 689.5,308.6 735.2,288.8 784.4,263.3 856.2,225.3 1046.0,165.0" fill="none" stroke="#3a3af5" stroke-width="1.05"/><rect x="665.8" y="313.7" width="3.8" height="3.8" fill="none" stroke="#3a3af5" stroke-width="1.1"/><rect x="687.6" y="305.9" width="3.8" height="3.8" fill="none" stroke="#3a3af5" stroke-width="1.1"/><rect x="733.3" y="287.9" width="3.8" height="3.8" fill="none" stroke="#3a3af5" stroke-width="1.1"/><rect x="782.5" y="263.4" width="3.8" height="3.8" fill="none" stroke="#3a3af5" stroke-width="1.1"/><rect x="854.4" y="226.7" width="3.8" height="3.8" fill="none" stroke="#3a3af5" stroke-width="1.1"/><rect x="1044.1" y="169.3" width="3.8" height="3.8" fill="none" stroke="#3a3af5" stroke-width="1.1"/><polyline points="667.7,314.0 689.5,307.0 735.2,285.6 784.4,259.0 856.2,220.3 1046.0,157.0" fill="none" stroke="#ff3030" stroke-width="1.05"/><rect x="665.8" y="312.9" width="3.8" height="3.8" fill="none" stroke="#ff3030" stroke-width="1.1"/><rect x="687.6" y="305.6" width="3.8" height="3.8" fill="none" stroke="#ff3030" stroke-width="1.1"/><rect x="733.3" y="284.5" width="3.8" height="3.8" fill="none" stroke="#ff3030" stroke-width="1.1"/><rect x="782.5" y="258.3" width="3.8" height="3.8" fill="none" stroke="#ff3030" stroke-width="1.1"/><rect x="854.4" y="219.5" width="3.8" height="3.8" fill="none" stroke="#ff3030" stroke-width="1.1"/><rect x="1044.1" y="160.1" width="3.8" height="3.8" fill="none" stroke="#ff3030" stroke-width="1.1"/><line x1="53.5" y1="588.77" x2="64.0" y2="588.77" stroke="#3a3a3a" stroke-width="1.2"/><line x1="53.5" y1="579.15" x2="64.0" y2="579.15" stroke="#3a3a3a" stroke-width="1.2"/><line x1="53.5" y1="569.52" x2="64.0" y2="569.52" stroke="#3a3a3a" stroke-width="1.2"/><line x1="53.5" y1="559.90" x2="64.0" y2="559.90" stroke="#3a3a3a" stroke-width="1.2"/><text x="51.3" y="601.30" text-anchor="end" font-size="10" fill="#222">6.0</text><line x1="73.5" y1="550.27" x2="530" y2="550.27" stroke="#8ccbf5" stroke-width="1" stroke-dasharray="1.25,1.25"/><line x1="53.5" y1="550.27" x2="73.5" y2="550.27" stroke="#333" stroke-width="1" stroke-dasharray="1.25,1.25"/><line x1="53.5" y1="540.65" x2="64.0" y2="540.65" stroke="#3a3a3a" stroke-width="1.2"/><line x1="53.5" y1="531.02" x2="64.0" y2="531.02" stroke="#3a3a3a" stroke-width="1.2"/><line x1="53.5" y1="521.40" x2="64.0" y2="521.40" stroke="#3a3a3a" stroke-width="1.2"/><line x1="53.5" y1="511.77" x2="64.0" y2="511.77" stroke="#3a3a3a" stroke-width="1.2"/><text x="51.3" y="553.17" text-anchor="end" font-size="10" fill="#222">6.5</text><line x1="73.5" y1="502.15" x2="530" y2="502.15" stroke="#8ccbf5" stroke-width="1" stroke-dasharray="1.25,1.25"/><line x1="53.5" y1="502.15" x2="73.5" y2="502.15" stroke="#333" stroke-width="1" stroke-dasharray="1.25,1.25"/><line x1="53.5" y1="492.52" x2="64.0" y2="492.52" stroke="#3a3a3a" stroke-width="1.2"/><line x1="53.5" y1="482.90" x2="64.0" y2="482.90" stroke="#3a3a3a" stroke-width="1.2"/><line x1="53.5" y1="473.27" x2="64.0" y2="473.27" stroke="#3a3a3a" stroke-width="1.2"/><line x1="53.5" y1="463.65" x2="64.0" y2="463.65" stroke="#3a3a3a" stroke-width="1.2"/><text x="51.3" y="505.05" text-anchor="end" font-size="10" fill="#222">7.0</text><line x1="73.5" y1="454.02" x2="530" y2="454.02" stroke="#8ccbf5" stroke-width="1" stroke-dasharray="1.25,1.25"/><line x1="53.5" y1="454.02" x2="73.5" y2="454.02" stroke="#333" stroke-width="1" stroke-dasharray="1.25,1.25"/><line x1="53.5" y1="444.40" x2="64.0" y2="444.40" stroke="#3a3a3a" stroke-width="1.2"/><line x1="53.5" y1="434.77" x2="64.0" y2="434.77" stroke="#3a3a3a" stroke-width="1.2"/><line x1="53.5" y1="425.15" x2="64.0" y2="425.15" stroke="#3a3a3a" stroke-width="1.2"/><line x1="53.5" y1="415.52" x2="64.0" y2="415.52" stroke="#3a3a3a" stroke-width="1.2"/><text x="51.3" y="456.92" text-anchor="end" font-size="10" fill="#222">7.5</text><text x="51.3" y="408.80" text-anchor="end" font-size="10" fill="#222">8.0</text><line x1="292.05" y1="405.9" x2="292.05" y2="590.4" stroke="#8ccbf5" stroke-width="1" stroke-dasharray="1.25,1.25"/><line x1="292.05" y1="590.4" x2="292.05" y2="598.4" stroke="#333" stroke-width="1" stroke-dasharray="1.25,1.25"/><line x1="292.05" y1="405.9" x2="292.05" y2="413.9" stroke="#333" stroke-width="1" stroke-dasharray="1.25,1.25"/><line x1="125.52" y1="405.9" x2="125.52" y2="409.9" stroke="#333" stroke-width="1"/><line x1="125.52" y1="594.4" x2="125.52" y2="598.4" stroke="#333" stroke-width="1"/><line x1="167.47" y1="405.9" x2="167.47" y2="409.9" stroke="#333" stroke-width="1"/><line x1="167.47" y1="594.4" x2="167.47" y2="598.4" stroke="#333" stroke-width="1"/><line x1="197.24" y1="405.9" x2="197.24" y2="409.9" stroke="#333" stroke-width="1"/><line x1="197.24" y1="594.4" x2="197.24" y2="598.4" stroke="#333" stroke-width="1"/><line x1="220.33" y1="405.9" x2="220.33" y2="409.9" stroke="#333" stroke-width="1"/><line x1="220.33" y1="594.4" x2="220.33" y2="598.4" stroke="#333" stroke-width="1"/><line x1="239.19" y1="405.9" x2="239.19" y2="409.9" stroke="#333" stroke-width="1"/><line x1="239.19" y1="594.4" x2="239.19" y2="598.4" stroke="#333" stroke-width="1"/><line x1="255.14" y1="405.9" x2="255.14" y2="409.9" stroke="#333" stroke-width="1"/><line x1="255.14" y1="594.4" x2="255.14" y2="598.4" stroke="#333" stroke-width="1"/><line x1="268.96" y1="405.9" x2="268.96" y2="409.9" stroke="#333" stroke-width="1"/><line x1="268.96" y1="594.4" x2="268.96" y2="598.4" stroke="#333" stroke-width="1"/><line x1="281.15" y1="405.9" x2="281.15" y2="409.9" stroke="#333" stroke-width="1"/><line x1="281.15" y1="594.4" x2="281.15" y2="598.4" stroke="#333" stroke-width="1"/><line x1="363.77" y1="405.9" x2="363.77" y2="409.9" stroke="#333" stroke-width="1"/><line x1="363.77" y1="594.4" x2="363.77" y2="598.4" stroke="#333" stroke-width="1"/><line x1="405.72" y1="405.9" x2="405.72" y2="409.9" stroke="#333" stroke-width="1"/><line x1="405.72" y1="594.4" x2="405.72" y2="598.4" stroke="#333" stroke-width="1"/><line x1="435.49" y1="405.9" x2="435.49" y2="409.9" stroke="#333" stroke-width="1"/><line x1="435.49" y1="594.4" x2="435.49" y2="598.4" stroke="#333" stroke-width="1"/><line x1="458.58" y1="405.9" x2="458.58" y2="409.9" stroke="#333" stroke-width="1"/><line x1="458.58" y1="594.4" x2="458.58" y2="598.4" stroke="#333" stroke-width="1"/><line x1="477.44" y1="405.9" x2="477.44" y2="409.9" stroke="#333" stroke-width="1"/><line x1="477.44" y1="594.4" x2="477.44" y2="598.4" stroke="#333" stroke-width="1"/><line x1="493.39" y1="405.9" x2="493.39" y2="409.9" stroke="#333" stroke-width="1"/><line x1="493.39" y1="594.4" x2="493.39" y2="598.4" stroke="#333" stroke-width="1"/><line x1="507.21" y1="405.9" x2="507.21" y2="409.9" stroke="#333" stroke-width="1"/><line x1="507.21" y1="594.4" x2="507.21" y2="598.4" stroke="#333" stroke-width="1"/><line x1="519.40" y1="405.9" x2="519.40" y2="409.9" stroke="#333" stroke-width="1"/><line x1="519.40" y1="594.4" x2="519.40" y2="598.4" stroke="#333" stroke-width="1"/><text x="53.80" y="610.20" text-anchor="middle" font-size="10" fill="#222">1E-7</text><text x="292.05" y="610.20" text-anchor="middle" font-size="10" fill="#222">1E-6</text><text x="530.30" y="610.20" text-anchor="middle" font-size="10" fill="#222">1E-5</text><path d="M53.8,405.65 H530.3 V598.5 H53.8 Z" fill="none" stroke="#3a3a3a" stroke-width="1.4"/><text x="278.5" y="392" text-anchor="middle" font-size="13.6" fill="#222">Id / W = f(Vb, WF) @ Vd=low, Vg=high</text><text x="290.25" y="625.60" text-anchor="middle" font-size="12" fill="#222" xml:space="preserve">WF  [LOG]</text><text transform="translate(23,602.43) rotate(-90)" font-size="12.4" fill="#222" xml:space="preserve">idmax.m / W  idmax.s / W<tspan dy="5" font-size="12">  [E+0]</tspan></text><rect x="29.90" y="560.69" width="4.6" height="4.6" fill="none" stroke="#222" stroke-width="1"/><rect x="29.90" y="570.69" width="4.6" height="4.6" fill="none" stroke="#222" stroke-width="1"/><line x1="31.3" y1="526.65" x2="31.3" y2="461.89" stroke="#222" stroke-width="1"/><polyline points="115.3,566.2 148.7,554.4 197.8,542.8 458.8,525.0" fill="none" stroke="#ffaa40" stroke-width="1.05"/><rect x="113.4" y="575.9" width="3.8" height="3.8" fill="none" stroke="#ffaa40" stroke-width="1.1"/><rect x="146.8" y="566.0" width="3.8" height="3.8" fill="none" stroke="#ffaa40" stroke-width="1.1"/><rect x="195.9" y="556.8" width="3.8" height="3.8" fill="none" stroke="#ffaa40" stroke-width="1.1"/><rect x="456.9" y="540.9" width="3.8" height="3.8" fill="none" stroke="#ffaa40" stroke-width="1.1"/><polyline points="115.3,543.7 148.7,532.8 197.8,521.2 458.8,503.4" fill="none" stroke="#30e830" stroke-width="1.05"/><rect x="113.4" y="551.9" width="3.8" height="3.8" fill="none" stroke="#30e830" stroke-width="1.1"/><rect x="146.8" y="541.8" width="3.8" height="3.8" fill="none" stroke="#30e830" stroke-width="1.1"/><rect x="195.9" y="531.9" width="3.8" height="3.8" fill="none" stroke="#30e830" stroke-width="1.1"/><rect x="456.9" y="516.9" width="3.8" height="3.8" fill="none" stroke="#30e830" stroke-width="1.1"/><polyline points="115.3,519.7 148.7,508.0 197.8,496.9 458.8,479.4" fill="none" stroke="#ff40ff" stroke-width="1.05"/><rect x="113.4" y="525.9" width="3.8" height="3.8" fill="none" stroke="#ff40ff" stroke-width="1.1"/><rect x="146.8" y="515.9" width="3.8" height="3.8" fill="none" stroke="#ff40ff" stroke-width="1.1"/><rect x="195.9" y="506.0" width="3.8" height="3.8" fill="none" stroke="#ff40ff" stroke-width="1.1"/><rect x="456.9" y="489.4" width="3.8" height="3.8" fill="none" stroke="#ff40ff" stroke-width="1.1"/><polyline points="115.3,493.5 148.7,481.9 197.8,470.6 458.8,453.4" fill="none" stroke="#3a3af5" stroke-width="1.05"/><rect x="113.4" y="496.9" width="3.8" height="3.8" fill="none" stroke="#3a3af5" stroke-width="1.1"/><rect x="146.8" y="486.0" width="3.8" height="3.8" fill="none" stroke="#3a3af5" stroke-width="1.1"/><rect x="195.9" y="475.3" width="3.8" height="3.8" fill="none" stroke="#3a3af5" stroke-width="1.1"/><rect x="456.9" y="457.5" width="3.8" height="3.8" fill="none" stroke="#3a3af5" stroke-width="1.1"/><polyline points="115.3,463.6 148.7,452.4 197.8,440.4 458.8,422.8" fill="none" stroke="#ff3030" stroke-width="1.05"/><rect x="113.4" y="462.7" width="3.8" height="3.8" fill="none" stroke="#ff3030" stroke-width="1.1"/><rect x="146.8" y="450.9" width="3.8" height="3.8" fill="none" stroke="#ff3030" stroke-width="1.1"/><rect x="195.9" y="439.3" width="3.8" height="3.8" fill="none" stroke="#ff3030" stroke-width="1.1"/><rect x="456.9" y="421.9" width="3.8" height="3.8" fill="none" stroke="#ff3030" stroke-width="1.1"/><line x1="640.2" y1="590.70" x2="650.7" y2="590.70" stroke="#3a3a3a" stroke-width="1.2"/><line x1="640.2" y1="583.00" x2="650.7" y2="583.00" stroke="#3a3a3a" stroke-width="1.2"/><line x1="640.2" y1="575.30" x2="650.7" y2="575.30" stroke="#3a3a3a" stroke-width="1.2"/><line x1="640.2" y1="567.60" x2="650.7" y2="567.60" stroke="#3a3a3a" stroke-width="1.2"/><text x="638.0" y="601.30" text-anchor="end" font-size="10" fill="#222">70</text><line x1="660.2" y1="559.90" x2="1117.2" y2="559.90" stroke="#8ccbf5" stroke-width="1" stroke-dasharray="1.25,1.25"/><line x1="640.2" y1="559.90" x2="660.2" y2="559.90" stroke="#333" stroke-width="1" stroke-dasharray="1.25,1.25"/><line x1="640.2" y1="552.20" x2="650.7" y2="552.20" stroke="#3a3a3a" stroke-width="1.2"/><line x1="640.2" y1="544.50" x2="650.7" y2="544.50" stroke="#3a3a3a" stroke-width="1.2"/><line x1="640.2" y1="536.80" x2="650.7" y2="536.80" stroke="#3a3a3a" stroke-width="1.2"/><line x1="640.2" y1="529.10" x2="650.7" y2="529.10" stroke="#3a3a3a" stroke-width="1.2"/><text x="638.0" y="562.80" text-anchor="end" font-size="10" fill="#222">75</text><line x1="660.2" y1="521.40" x2="1117.2" y2="521.40" stroke="#8ccbf5" stroke-width="1" stroke-dasharray="1.25,1.25"/><line x1="640.2" y1="521.40" x2="660.2" y2="521.40" stroke="#333" stroke-width="1" stroke-dasharray="1.25,1.25"/><line x1="640.2" y1="513.70" x2="650.7" y2="513.70" stroke="#3a3a3a" stroke-width="1.2"/><line x1="640.2" y1="506.00" x2="650.7" y2="506.00" stroke="#3a3a3a" stroke-width="1.2"/><line x1="640.2" y1="498.30" x2="650.7" y2="498.30" stroke="#3a3a3a" stroke-width="1.2"/><line x1="640.2" y1="490.60" x2="650.7" y2="490.60" stroke="#3a3a3a" stroke-width="1.2"/><text x="638.0" y="524.30" text-anchor="end" font-size="10" fill="#222">80</text><line x1="660.2" y1="482.90" x2="1117.2" y2="482.90" stroke="#8ccbf5" stroke-width="1" stroke-dasharray="1.25,1.25"/><line x1="640.2" y1="482.90" x2="660.2" y2="482.90" stroke="#333" stroke-width="1" stroke-dasharray="1.25,1.25"/><line x1="640.2" y1="475.20" x2="650.7" y2="475.20" stroke="#3a3a3a" stroke-width="1.2"/><line x1="640.2" y1="467.50" x2="650.7" y2="467.50" stroke="#3a3a3a" stroke-width="1.2"/><line x1="640.2" y1="459.80" x2="650.7" y2="459.80" stroke="#3a3a3a" stroke-width="1.2"/><line x1="640.2" y1="452.10" x2="650.7" y2="452.10" stroke="#3a3a3a" stroke-width="1.2"/><text x="638.0" y="485.80" text-anchor="end" font-size="10" fill="#222">85</text><line x1="660.2" y1="444.40" x2="1117.2" y2="444.40" stroke="#8ccbf5" stroke-width="1" stroke-dasharray="1.25,1.25"/><line x1="640.2" y1="444.40" x2="660.2" y2="444.40" stroke="#333" stroke-width="1" stroke-dasharray="1.25,1.25"/><line x1="640.2" y1="436.70" x2="650.7" y2="436.70" stroke="#3a3a3a" stroke-width="1.2"/><line x1="640.2" y1="429.00" x2="650.7" y2="429.00" stroke="#3a3a3a" stroke-width="1.2"/><line x1="640.2" y1="421.30" x2="650.7" y2="421.30" stroke="#3a3a3a" stroke-width="1.2"/><line x1="640.2" y1="413.60" x2="650.7" y2="413.60" stroke="#3a3a3a" stroke-width="1.2"/><text x="638.0" y="447.30" text-anchor="end" font-size="10" fill="#222">90</text><text x="638.0" y="408.80" text-anchor="end" font-size="10" fill="#222">95</text><line x1="879.00" y1="405.9" x2="879.00" y2="590.4" stroke="#8ccbf5" stroke-width="1" stroke-dasharray="1.25,1.25"/><line x1="879.00" y1="590.4" x2="879.00" y2="598.4" stroke="#333" stroke-width="1" stroke-dasharray="1.25,1.25"/><line x1="879.00" y1="405.9" x2="879.00" y2="413.9" stroke="#333" stroke-width="1" stroke-dasharray="1.25,1.25"/><line x1="712.30" y1="405.9" x2="712.30" y2="409.9" stroke="#333" stroke-width="1"/><line x1="712.30" y1="594.4" x2="712.30" y2="598.4" stroke="#333" stroke-width="1"/><line x1="754.29" y1="405.9" x2="754.29" y2="409.9" stroke="#333" stroke-width="1"/><line x1="754.29" y1="594.4" x2="754.29" y2="598.4" stroke="#333" stroke-width="1"/><line x1="784.09" y1="405.9" x2="784.09" y2="409.9" stroke="#333" stroke-width="1"/><line x1="784.09" y1="594.4" x2="784.09" y2="598.4" stroke="#333" stroke-width="1"/><line x1="807.20" y1="405.9" x2="807.20" y2="409.9" stroke="#333" stroke-width="1"/><line x1="807.20" y1="594.4" x2="807.20" y2="598.4" stroke="#333" stroke-width="1"/><line x1="826.09" y1="405.9" x2="826.09" y2="409.9" stroke="#333" stroke-width="1"/><line x1="826.09" y1="594.4" x2="826.09" y2="598.4" stroke="#333" stroke-width="1"/><line x1="842.06" y1="405.9" x2="842.06" y2="409.9" stroke="#333" stroke-width="1"/><line x1="842.06" y1="594.4" x2="842.06" y2="598.4" stroke="#333" stroke-width="1"/><line x1="855.89" y1="405.9" x2="855.89" y2="409.9" stroke="#333" stroke-width="1"/><line x1="855.89" y1="594.4" x2="855.89" y2="598.4" stroke="#333" stroke-width="1"/><line x1="868.09" y1="405.9" x2="868.09" y2="409.9" stroke="#333" stroke-width="1"/><line x1="868.09" y1="594.4" x2="868.09" y2="598.4" stroke="#333" stroke-width="1"/><line x1="950.80" y1="405.9" x2="950.80" y2="409.9" stroke="#333" stroke-width="1"/><line x1="950.80" y1="594.4" x2="950.80" y2="598.4" stroke="#333" stroke-width="1"/><line x1="992.79" y1="405.9" x2="992.79" y2="409.9" stroke="#333" stroke-width="1"/><line x1="992.79" y1="594.4" x2="992.79" y2="598.4" stroke="#333" stroke-width="1"/><line x1="1022.59" y1="405.9" x2="1022.59" y2="409.9" stroke="#333" stroke-width="1"/><line x1="1022.59" y1="594.4" x2="1022.59" y2="598.4" stroke="#333" stroke-width="1"/><line x1="1045.70" y1="405.9" x2="1045.70" y2="409.9" stroke="#333" stroke-width="1"/><line x1="1045.70" y1="594.4" x2="1045.70" y2="598.4" stroke="#333" stroke-width="1"/><line x1="1064.59" y1="405.9" x2="1064.59" y2="409.9" stroke="#333" stroke-width="1"/><line x1="1064.59" y1="594.4" x2="1064.59" y2="598.4" stroke="#333" stroke-width="1"/><line x1="1080.56" y1="405.9" x2="1080.56" y2="409.9" stroke="#333" stroke-width="1"/><line x1="1080.56" y1="594.4" x2="1080.56" y2="598.4" stroke="#333" stroke-width="1"/><line x1="1094.39" y1="405.9" x2="1094.39" y2="409.9" stroke="#333" stroke-width="1"/><line x1="1094.39" y1="594.4" x2="1094.39" y2="598.4" stroke="#333" stroke-width="1"/><line x1="1106.59" y1="405.9" x2="1106.59" y2="409.9" stroke="#333" stroke-width="1"/><line x1="1106.59" y1="594.4" x2="1106.59" y2="598.4" stroke="#333" stroke-width="1"/><text x="640.50" y="610.20" text-anchor="middle" font-size="10" fill="#222">1E-7</text><text x="879.00" y="610.20" text-anchor="middle" font-size="10" fill="#222">1E-6</text><text x="1117.50" y="610.20" text-anchor="middle" font-size="10" fill="#222">1E-5</text><path d="M640.5,405.65 H1117.5 V598.5 H640.5 Z" fill="none" stroke="#3a3a3a" stroke-width="1.4"/><text x="865.5" y="392" text-anchor="middle" font-size="13.6" fill="#222">Idsat / W = f(Vb, WF) @ Vd=high, Vg=high</text><text x="877.20" y="625.60" text-anchor="middle" font-size="12" fill="#222" xml:space="preserve">WF  [LOG]</text><text transform="translate(610,595.55) rotate(-90)" font-size="12.4" fill="#222" xml:space="preserve">idsat.m / W  idsat.s / W<tspan dy="5" font-size="12">  [E+0]</tspan></text><rect x="616.90" y="557.24" width="4.6" height="4.6" fill="none" stroke="#222" stroke-width="1"/><rect x="616.90" y="567.24" width="4.6" height="4.6" fill="none" stroke="#222" stroke-width="1"/><line x1="618.3" y1="526.65" x2="618.3" y2="468.77" stroke="#222" stroke-width="1"/><polyline points="701.2,554.4 735.3,539.0 783.7,524.4 1045.0,500.0" fill="none" stroke="#ffaa40" stroke-width="1.05"/><rect x="699.3" y="566.0" width="3.8" height="3.8" fill="none" stroke="#ffaa40" stroke-width="1.1"/><rect x="733.4" y="556.8" width="3.8" height="3.8" fill="none" stroke="#ffaa40" stroke-width="1.1"/><rect x="781.8" y="547.8" width="3.8" height="3.8" fill="none" stroke="#ffaa40" stroke-width="1.1"/><rect x="1043.1" y="532.4" width="3.8" height="3.8" fill="none" stroke="#ffaa40" stroke-width="1.1"/><polyline points="701.2,533.2 735.3,517.8 783.7,503.8 1045.0,479.0" fill="none" stroke="#30e830" stroke-width="1.05"/><rect x="699.3" y="543.5" width="3.8" height="3.8" fill="none" stroke="#30e830" stroke-width="1.1"/><rect x="733.4" y="533.4" width="3.8" height="3.8" fill="none" stroke="#30e830" stroke-width="1.1"/><rect x="781.8" y="523.8" width="3.8" height="3.8" fill="none" stroke="#30e830" stroke-width="1.1"/><rect x="1043.1" y="508.4" width="3.8" height="3.8" fill="none" stroke="#30e830" stroke-width="1.1"/><polyline points="701.2,509.6 735.3,495.4 783.7,481.5 1045.0,457.1" fill="none" stroke="#ff40ff" stroke-width="1.05"/><rect x="699.3" y="517.5" width="3.8" height="3.8" fill="none" stroke="#ff40ff" stroke-width="1.1"/><rect x="733.4" y="507.5" width="3.8" height="3.8" fill="none" stroke="#ff40ff" stroke-width="1.1"/><rect x="781.8" y="497.4" width="3.8" height="3.8" fill="none" stroke="#ff40ff" stroke-width="1.1"/><rect x="1043.1" y="481.5" width="3.8" height="3.8" fill="none" stroke="#ff40ff" stroke-width="1.1"/><polyline points="701.2,485.2 735.3,471.0 783.7,457.1 1045.0,433.5" fill="none" stroke="#3a3af5" stroke-width="1.05"/><rect x="699.3" y="490.3" width="3.8" height="3.8" fill="none" stroke="#3a3af5" stroke-width="1.1"/><rect x="733.4" y="479.4" width="3.8" height="3.8" fill="none" stroke="#3a3af5" stroke-width="1.1"/><rect x="781.8" y="469.3" width="3.8" height="3.8" fill="none" stroke="#3a3af5" stroke-width="1.1"/><rect x="1043.1" y="452.8" width="3.8" height="3.8" fill="none" stroke="#3a3af5" stroke-width="1.1"/><polyline points="701.2,459.0 735.3,445.3 783.7,431.8 1045.0,407.4" fill="none" stroke="#ff3030" stroke-width="1.05"/><rect x="699.3" y="460.3" width="3.8" height="3.8" fill="none" stroke="#ff3030" stroke-width="1.1"/><rect x="733.4" y="449.4" width="3.8" height="3.8" fill="none" stroke="#ff3030" stroke-width="1.1"/><rect x="781.8" y="438.7" width="3.8" height="3.8" fill="none" stroke="#ff3030" stroke-width="1.1"/><rect x="1043.1" y="420.9" width="3.8" height="3.8" fill="none" stroke="#ff3030" stroke-width="1.1"/><line x1="53.5" y1="850.53" x2="64.0" y2="850.53" stroke="#3a3a3a" stroke-width="1.2"/><line x1="53.5" y1="840.86" x2="64.0" y2="840.86" stroke="#3a3a3a" stroke-width="1.2"/><line x1="53.5" y1="831.19" x2="64.0" y2="831.19" stroke="#3a3a3a" stroke-width="1.2"/><line x1="53.5" y1="821.52" x2="64.0" y2="821.52" stroke="#3a3a3a" stroke-width="1.2"/><text x="51.3" y="863.10" text-anchor="end" font-size="10" fill="#222">20</text><line x1="73.5" y1="811.85" x2="530" y2="811.85" stroke="#8ccbf5" stroke-width="1" stroke-dasharray="1.25,1.25"/><line x1="53.5" y1="811.85" x2="73.5" y2="811.85" stroke="#333" stroke-width="1" stroke-dasharray="1.25,1.25"/><line x1="53.5" y1="802.18" x2="64.0" y2="802.18" stroke="#3a3a3a" stroke-width="1.2"/><line x1="53.5" y1="792.51" x2="64.0" y2="792.51" stroke="#3a3a3a" stroke-width="1.2"/><line x1="53.5" y1="782.84" x2="64.0" y2="782.84" stroke="#3a3a3a" stroke-width="1.2"/><line x1="53.5" y1="773.17" x2="64.0" y2="773.17" stroke="#3a3a3a" stroke-width="1.2"/><text x="51.3" y="814.75" text-anchor="end" font-size="10" fill="#222">25</text><line x1="73.5" y1="763.50" x2="530" y2="763.50" stroke="#8ccbf5" stroke-width="1" stroke-dasharray="1.25,1.25"/><line x1="53.5" y1="763.50" x2="73.5" y2="763.50" stroke="#333" stroke-width="1" stroke-dasharray="1.25,1.25"/><line x1="53.5" y1="753.83" x2="64.0" y2="753.83" stroke="#3a3a3a" stroke-width="1.2"/><line x1="53.5" y1="744.16" x2="64.0" y2="744.16" stroke="#3a3a3a" stroke-width="1.2"/><line x1="53.5" y1="734.49" x2="64.0" y2="734.49" stroke="#3a3a3a" stroke-width="1.2"/><line x1="53.5" y1="724.82" x2="64.0" y2="724.82" stroke="#3a3a3a" stroke-width="1.2"/><text x="51.3" y="766.40" text-anchor="end" font-size="10" fill="#222">30</text><line x1="73.5" y1="715.15" x2="530" y2="715.15" stroke="#8ccbf5" stroke-width="1" stroke-dasharray="1.25,1.25"/><line x1="53.5" y1="715.15" x2="73.5" y2="715.15" stroke="#333" stroke-width="1" stroke-dasharray="1.25,1.25"/><line x1="53.5" y1="705.48" x2="64.0" y2="705.48" stroke="#3a3a3a" stroke-width="1.2"/><line x1="53.5" y1="695.81" x2="64.0" y2="695.81" stroke="#3a3a3a" stroke-width="1.2"/><line x1="53.5" y1="686.14" x2="64.0" y2="686.14" stroke="#3a3a3a" stroke-width="1.2"/><line x1="53.5" y1="676.47" x2="64.0" y2="676.47" stroke="#3a3a3a" stroke-width="1.2"/><text x="51.3" y="718.05" text-anchor="end" font-size="10" fill="#222">35</text><text x="51.3" y="669.70" text-anchor="end" font-size="10" fill="#222">40</text><line x1="292.05" y1="666.8" x2="292.05" y2="852.2" stroke="#8ccbf5" stroke-width="1" stroke-dasharray="1.25,1.25"/><line x1="292.05" y1="852.2" x2="292.05" y2="860.2" stroke="#333" stroke-width="1" stroke-dasharray="1.25,1.25"/><line x1="292.05" y1="666.8" x2="292.05" y2="674.8" stroke="#333" stroke-width="1" stroke-dasharray="1.25,1.25"/><line x1="125.52" y1="666.8" x2="125.52" y2="670.8" stroke="#333" stroke-width="1"/><line x1="125.52" y1="856.2" x2="125.52" y2="860.2" stroke="#333" stroke-width="1"/><line x1="167.47" y1="666.8" x2="167.47" y2="670.8" stroke="#333" stroke-width="1"/><line x1="167.47" y1="856.2" x2="167.47" y2="860.2" stroke="#333" stroke-width="1"/><line x1="197.24" y1="666.8" x2="197.24" y2="670.8" stroke="#333" stroke-width="1"/><line x1="197.24" y1="856.2" x2="197.24" y2="860.2" stroke="#333" stroke-width="1"/><line x1="220.33" y1="666.8" x2="220.33" y2="670.8" stroke="#333" stroke-width="1"/><line x1="220.33" y1="856.2" x2="220.33" y2="860.2" stroke="#333" stroke-width="1"/><line x1="239.19" y1="666.8" x2="239.19" y2="670.8" stroke="#333" stroke-width="1"/><line x1="239.19" y1="856.2" x2="239.19" y2="860.2" stroke="#333" stroke-width="1"/><line x1="255.14" y1="666.8" x2="255.14" y2="670.8" stroke="#333" stroke-width="1"/><line x1="255.14" y1="856.2" x2="255.14" y2="860.2" stroke="#333" stroke-width="1"/><line x1="268.96" y1="666.8" x2="268.96" y2="670.8" stroke="#333" stroke-width="1"/><line x1="268.96" y1="856.2" x2="268.96" y2="860.2" stroke="#333" stroke-width="1"/><line x1="281.15" y1="666.8" x2="281.15" y2="670.8" stroke="#333" stroke-width="1"/><line x1="281.15" y1="856.2" x2="281.15" y2="860.2" stroke="#333" stroke-width="1"/><line x1="363.77" y1="666.8" x2="363.77" y2="670.8" stroke="#333" stroke-width="1"/><line x1="363.77" y1="856.2" x2="363.77" y2="860.2" stroke="#333" stroke-width="1"/><line x1="405.72" y1="666.8" x2="405.72" y2="670.8" stroke="#333" stroke-width="1"/><line x1="405.72" y1="856.2" x2="405.72" y2="860.2" stroke="#333" stroke-width="1"/><line x1="435.49" y1="666.8" x2="435.49" y2="670.8" stroke="#333" stroke-width="1"/><line x1="435.49" y1="856.2" x2="435.49" y2="860.2" stroke="#333" stroke-width="1"/><line x1="458.58" y1="666.8" x2="458.58" y2="670.8" stroke="#333" stroke-width="1"/><line x1="458.58" y1="856.2" x2="458.58" y2="860.2" stroke="#333" stroke-width="1"/><line x1="477.44" y1="666.8" x2="477.44" y2="670.8" stroke="#333" stroke-width="1"/><line x1="477.44" y1="856.2" x2="477.44" y2="860.2" stroke="#333" stroke-width="1"/><line x1="493.39" y1="666.8" x2="493.39" y2="670.8" stroke="#333" stroke-width="1"/><line x1="493.39" y1="856.2" x2="493.39" y2="860.2" stroke="#333" stroke-width="1"/><line x1="507.21" y1="666.8" x2="507.21" y2="670.8" stroke="#333" stroke-width="1"/><line x1="507.21" y1="856.2" x2="507.21" y2="860.2" stroke="#333" stroke-width="1"/><line x1="519.40" y1="666.8" x2="519.40" y2="670.8" stroke="#333" stroke-width="1"/><line x1="519.40" y1="856.2" x2="519.40" y2="860.2" stroke="#333" stroke-width="1"/><text x="53.80" y="872.00" text-anchor="middle" font-size="10" fill="#222">1E-7</text><text x="292.05" y="872.00" text-anchor="middle" font-size="10" fill="#222">1E-6</text><text x="530.30" y="872.00" text-anchor="middle" font-size="10" fill="#222">1E-5</text><path d="M53.8,666.55 H530.3 V860.3000000000001 H53.8 Z" fill="none" stroke="#3a3a3a" stroke-width="1.4"/><text x="278.5" y="653" text-anchor="middle" font-size="13.6" fill="#222">Idlin * L / W = f(L, WF) @ Vd=low, Vg=high</text><text x="290.25" y="887.40" text-anchor="middle" font-size="12" fill="#222" xml:space="preserve">L  [LOG]</text><text transform="translate(23,869.41) rotate(-90)" font-size="12.4" fill="#222" xml:space="preserve">idlin.m * L / W  idlin.s * L / W<tspan dy="5" font-size="12">  [E-6]</tspan></text><rect x="29.90" y="824.10" width="4.6" height="4.6" fill="none" stroke="#222" stroke-width="1"/><rect x="29.90" y="834.10" width="4.6" height="4.6" fill="none" stroke="#222" stroke-width="1"/><line x1="31.3" y1="786.50" x2="31.3" y2="714.60" stroke="#222" stroke-width="1"/><path d="M29.2,752.55 L31.3,748.05 L33.4,752.55 Z" fill="#fff" stroke="#222" stroke-width="1"/><polyline points="81.0,832.5 101.8,822.2 148.7,791.2 458.5,695.2" fill="none" stroke="#ff3030" stroke-width="1.05"/><path d="M79.0,834.1 L81.0,830.3 L83.0,834.1 Z" fill="#ff3030" fill-opacity="0.5" stroke="#ff3030" stroke-width="0.9"/><path d="M99.8,823.8 L101.8,820.0 L103.8,823.8 Z" fill="#ff3030" fill-opacity="0.5" stroke="#ff3030" stroke-width="0.9"/><path d="M146.7,792.9 L148.7,789.0 L150.7,792.9 Z" fill="#ff3030" fill-opacity="0.5" stroke="#ff3030" stroke-width="0.9"/><path d="M456.5,696.8 L458.5,693.0 L460.5,696.8 Z" fill="#ff3030" fill-opacity="0.5" stroke="#ff3030" stroke-width="0.9"/><rect x="79.1" y="840.0" width="3.8" height="3.8" fill="none" stroke="#ff3030" stroke-width="1.1"/><rect x="99.9" y="825.0" width="3.8" height="3.8" fill="none" stroke="#ff3030" stroke-width="1.1"/><rect x="146.8" y="792.7" width="3.8" height="3.8" fill="none" stroke="#ff3030" stroke-width="1.1"/><rect x="456.6" y="693.3" width="3.8" height="3.8" fill="none" stroke="#ff3030" stroke-width="1.1"/><polyline points="81.0,831.6 101.8,819.4 148.7,788.4 458.5,689.4" fill="none" stroke="#3a3af5" stroke-width="1.05"/><path d="M79.0,833.2 L81.0,829.4 L83.0,833.2 Z" fill="#3a3af5" fill-opacity="0.5" stroke="#3a3af5" stroke-width="0.9"/><path d="M99.8,821.0 L101.8,817.2 L103.8,821.0 Z" fill="#3a3af5" fill-opacity="0.5" stroke="#3a3af5" stroke-width="0.9"/><path d="M146.7,790.0 L148.7,786.2 L150.7,790.0 Z" fill="#3a3af5" fill-opacity="0.5" stroke="#3a3af5" stroke-width="0.9"/><path d="M456.5,691.0 L458.5,687.2 L460.5,691.0 Z" fill="#3a3af5" fill-opacity="0.5" stroke="#3a3af5" stroke-width="0.9"/><rect x="79.1" y="837.1" width="3.8" height="3.8" fill="none" stroke="#3a3af5" stroke-width="1.1"/><rect x="99.9" y="823.1" width="3.8" height="3.8" fill="none" stroke="#3a3af5" stroke-width="1.1"/><rect x="146.8" y="790.6" width="3.8" height="3.8" fill="none" stroke="#3a3af5" stroke-width="1.1"/><rect x="456.6" y="687.5" width="3.8" height="3.8" fill="none" stroke="#3a3af5" stroke-width="1.1"/><rect x="456.6" y="681.7" width="3.8" height="3.8" fill="none" stroke="#ff40ff" stroke-width="1.1"/><polyline points="81.0,826.9 101.8,814.7 148.7,781.0 196.9,748.4 268.7,711.9 458.5,675.0" fill="none" stroke="#30e830" stroke-width="1.05"/><path d="M79.0,828.5 L81.0,824.7 L83.0,828.5 Z" fill="#30e830" fill-opacity="0.5" stroke="#30e830" stroke-width="0.9"/><path d="M99.8,816.3 L101.8,812.5 L103.8,816.3 Z" fill="#30e830" fill-opacity="0.5" stroke="#30e830" stroke-width="0.9"/><path d="M146.7,782.6 L148.7,778.8 L150.7,782.6 Z" fill="#30e830" fill-opacity="0.5" stroke="#30e830" stroke-width="0.9"/><path d="M194.9,750.0 L196.9,746.2 L198.9,750.0 Z" fill="#30e830" fill-opacity="0.5" stroke="#30e830" stroke-width="0.9"/><path d="M266.7,713.5 L268.7,709.7 L270.7,713.5 Z" fill="#30e830" fill-opacity="0.5" stroke="#30e830" stroke-width="0.9"/><path d="M456.5,676.6 L458.5,672.8 L460.5,676.6 Z" fill="#30e830" fill-opacity="0.5" stroke="#30e830" stroke-width="0.9"/><rect x="79.1" y="827.1" width="3.8" height="3.8" fill="none" stroke="#30e830" stroke-width="1.1"/><rect x="99.9" y="815.1" width="3.8" height="3.8" fill="none" stroke="#30e830" stroke-width="1.1"/><rect x="146.8" y="781.1" width="3.8" height="3.8" fill="none" stroke="#30e830" stroke-width="1.1"/><rect x="195.0" y="746.5" width="3.8" height="3.8" fill="none" stroke="#30e830" stroke-width="1.1"/><rect x="266.8" y="710.0" width="3.8" height="3.8" fill="none" stroke="#30e830" stroke-width="1.1"/><rect x="456.6" y="672.6" width="3.8" height="3.8" fill="none" stroke="#30e830" stroke-width="1.1"/><line x1="642.6" y1="850.62" x2="653.1" y2="850.62" stroke="#3a3a3a" stroke-width="1.2"/><line x1="642.6" y1="840.95" x2="653.1" y2="840.95" stroke="#3a3a3a" stroke-width="1.2"/><line x1="642.6" y1="831.27" x2="653.1" y2="831.27" stroke="#3a3a3a" stroke-width="1.2"/><line x1="642.6" y1="821.60" x2="653.1" y2="821.60" stroke="#3a3a3a" stroke-width="1.2"/><text x="640.4" y="863.20" text-anchor="end" font-size="10" fill="#222">100</text><line x1="662.6" y1="811.92" x2="1117.2" y2="811.92" stroke="#8ccbf5" stroke-width="1" stroke-dasharray="1.25,1.25"/><line x1="642.6" y1="811.92" x2="662.6" y2="811.92" stroke="#333" stroke-width="1" stroke-dasharray="1.25,1.25"/><line x1="642.6" y1="802.25" x2="653.1" y2="802.25" stroke="#3a3a3a" stroke-width="1.2"/><line x1="642.6" y1="792.57" x2="653.1" y2="792.57" stroke="#3a3a3a" stroke-width="1.2"/><line x1="642.6" y1="782.90" x2="653.1" y2="782.90" stroke="#3a3a3a" stroke-width="1.2"/><line x1="642.6" y1="773.22" x2="653.1" y2="773.22" stroke="#3a3a3a" stroke-width="1.2"/><text x="640.4" y="814.82" text-anchor="end" font-size="10" fill="#222">200</text><line x1="662.6" y1="763.55" x2="1117.2" y2="763.55" stroke="#8ccbf5" stroke-width="1" stroke-dasharray="1.25,1.25"/><line x1="642.6" y1="763.55" x2="662.6" y2="763.55" stroke="#333" stroke-width="1" stroke-dasharray="1.25,1.25"/><line x1="642.6" y1="753.88" x2="653.1" y2="753.88" stroke="#3a3a3a" stroke-width="1.2"/><line x1="642.6" y1="744.20" x2="653.1" y2="744.20" stroke="#3a3a3a" stroke-width="1.2"/><line x1="642.6" y1="734.52" x2="653.1" y2="734.52" stroke="#3a3a3a" stroke-width="1.2"/><line x1="642.6" y1="724.85" x2="653.1" y2="724.85" stroke="#3a3a3a" stroke-width="1.2"/><text x="640.4" y="766.45" text-anchor="end" font-size="10" fill="#222">300</text><line x1="662.6" y1="715.17" x2="1117.2" y2="715.17" stroke="#8ccbf5" stroke-width="1" stroke-dasharray="1.25,1.25"/><line x1="642.6" y1="715.17" x2="662.6" y2="715.17" stroke="#333" stroke-width="1" stroke-dasharray="1.25,1.25"/><line x1="642.6" y1="705.50" x2="653.1" y2="705.50" stroke="#3a3a3a" stroke-width="1.2"/><line x1="642.6" y1="695.82" x2="653.1" y2="695.82" stroke="#3a3a3a" stroke-width="1.2"/><line x1="642.6" y1="686.15" x2="653.1" y2="686.15" stroke="#3a3a3a" stroke-width="1.2"/><line x1="642.6" y1="676.47" x2="653.1" y2="676.47" stroke="#3a3a3a" stroke-width="1.2"/><text x="640.4" y="718.07" text-anchor="end" font-size="10" fill="#222">400</text><text x="640.4" y="669.70" text-anchor="end" font-size="10" fill="#222">500</text><line x1="880.20" y1="666.8" x2="880.20" y2="852.3" stroke="#8ccbf5" stroke-width="1" stroke-dasharray="1.25,1.25"/><line x1="880.20" y1="852.3" x2="880.20" y2="860.3" stroke="#333" stroke-width="1" stroke-dasharray="1.25,1.25"/><line x1="880.20" y1="666.8" x2="880.20" y2="674.8" stroke="#333" stroke-width="1" stroke-dasharray="1.25,1.25"/><line x1="714.33" y1="666.8" x2="714.33" y2="670.8" stroke="#333" stroke-width="1"/><line x1="714.33" y1="856.3" x2="714.33" y2="860.3" stroke="#333" stroke-width="1"/><line x1="756.12" y1="666.8" x2="756.12" y2="670.8" stroke="#333" stroke-width="1"/><line x1="756.12" y1="856.3" x2="756.12" y2="860.3" stroke="#333" stroke-width="1"/><line x1="785.77" y1="666.8" x2="785.77" y2="670.8" stroke="#333" stroke-width="1"/><line x1="785.77" y1="856.3" x2="785.77" y2="860.3" stroke="#333" stroke-width="1"/><line x1="808.77" y1="666.8" x2="808.77" y2="670.8" stroke="#333" stroke-width="1"/><line x1="808.77" y1="856.3" x2="808.77" y2="860.3" stroke="#333" stroke-width="1"/><line x1="827.56" y1="666.8" x2="827.56" y2="670.8" stroke="#333" stroke-width="1"/><line x1="827.56" y1="856.3" x2="827.56" y2="860.3" stroke="#333" stroke-width="1"/><line x1="843.44" y1="666.8" x2="843.44" y2="670.8" stroke="#333" stroke-width="1"/><line x1="843.44" y1="856.3" x2="843.44" y2="860.3" stroke="#333" stroke-width="1"/><line x1="857.20" y1="666.8" x2="857.20" y2="670.8" stroke="#333" stroke-width="1"/><line x1="857.20" y1="856.3" x2="857.20" y2="860.3" stroke="#333" stroke-width="1"/><line x1="869.34" y1="666.8" x2="869.34" y2="670.8" stroke="#333" stroke-width="1"/><line x1="869.34" y1="856.3" x2="869.34" y2="860.3" stroke="#333" stroke-width="1"/><line x1="951.63" y1="666.8" x2="951.63" y2="670.8" stroke="#333" stroke-width="1"/><line x1="951.63" y1="856.3" x2="951.63" y2="860.3" stroke="#333" stroke-width="1"/><line x1="993.42" y1="666.8" x2="993.42" y2="670.8" stroke="#333" stroke-width="1"/><line x1="993.42" y1="856.3" x2="993.42" y2="860.3" stroke="#333" stroke-width="1"/><line x1="1023.07" y1="666.8" x2="1023.07" y2="670.8" stroke="#333" stroke-width="1"/><line x1="1023.07" y1="856.3" x2="1023.07" y2="860.3" stroke="#333" stroke-width="1"/><line x1="1046.07" y1="666.8" x2="1046.07" y2="670.8" stroke="#333" stroke-width="1"/><line x1="1046.07" y1="856.3" x2="1046.07" y2="860.3" stroke="#333" stroke-width="1"/><line x1="1064.86" y1="666.8" x2="1064.86" y2="670.8" stroke="#333" stroke-width="1"/><line x1="1064.86" y1="856.3" x2="1064.86" y2="860.3" stroke="#333" stroke-width="1"/><line x1="1080.74" y1="666.8" x2="1080.74" y2="670.8" stroke="#333" stroke-width="1"/><line x1="1080.74" y1="856.3" x2="1080.74" y2="860.3" stroke="#333" stroke-width="1"/><line x1="1094.50" y1="666.8" x2="1094.50" y2="670.8" stroke="#333" stroke-width="1"/><line x1="1094.50" y1="856.3" x2="1094.50" y2="860.3" stroke="#333" stroke-width="1"/><line x1="1106.64" y1="666.8" x2="1106.64" y2="670.8" stroke="#333" stroke-width="1"/><line x1="1106.64" y1="856.3" x2="1106.64" y2="860.3" stroke="#333" stroke-width="1"/><text x="642.90" y="872.10" text-anchor="middle" font-size="10" fill="#222">1E-7</text><text x="880.20" y="872.10" text-anchor="middle" font-size="10" fill="#222">1E-6</text><text x="1117.50" y="872.10" text-anchor="middle" font-size="10" fill="#222">1E-5</text><path d="M642.9,666.55 H1117.5 V860.4 H642.9 Z" fill="none" stroke="#3a3a3a" stroke-width="1.4"/><text x="865.5" y="653" text-anchor="middle" font-size="13.6" fill="#222">Idsat * L / W = f(L, W) @ Vd=high, Vg=high</text><text x="878.40" y="887.50" text-anchor="middle" font-size="12" fill="#222" xml:space="preserve">L  [LOG]</text><text transform="translate(610,873.59) rotate(-90)" font-size="12.4" fill="#222" xml:space="preserve">idsat.m * L / W  idsat.s * L / W<tspan dy="5" font-size="12">  [E-6]</tspan></text><rect x="616.90" y="826.21" width="4.6" height="4.6" fill="none" stroke="#222" stroke-width="1"/><rect x="616.90" y="836.21" width="4.6" height="4.6" fill="none" stroke="#222" stroke-width="1"/><line x1="618.3" y1="786.55" x2="618.3" y2="710.52" stroke="#222" stroke-width="1"/><path d="M616.2,750.53 L618.3,746.03 L620.4,750.53 Z" fill="#fff" stroke="#222" stroke-width="1"/><polyline points="670.2,839.3 692.0,834.0 737.9,814.7 1046.0,695.0" fill="none" stroke="#ff3030" stroke-width="1.05"/><path d="M668.2,840.9 L670.2,837.1 L672.2,840.9 Z" fill="#ff3030" fill-opacity="0.5" stroke="#ff3030" stroke-width="0.9"/><path d="M690.0,835.6 L692.0,831.8 L694.0,835.6 Z" fill="#ff3030" fill-opacity="0.5" stroke="#ff3030" stroke-width="0.9"/><path d="M735.9,816.3 L737.9,812.5 L739.9,816.3 Z" fill="#ff3030" fill-opacity="0.5" stroke="#ff3030" stroke-width="0.9"/><path d="M1044.0,696.6 L1046.0,692.8 L1048.0,696.6 Z" fill="#ff3030" fill-opacity="0.5" stroke="#ff3030" stroke-width="0.9"/><rect x="668.3" y="839.6" width="3.8" height="3.8" fill="none" stroke="#ff3030" stroke-width="1.1"/><rect x="690.1" y="832.6" width="3.8" height="3.8" fill="none" stroke="#ff3030" stroke-width="1.1"/><rect x="736.0" y="814.1" width="3.8" height="3.8" fill="none" stroke="#ff3030" stroke-width="1.1"/><rect x="1044.1" y="693.1" width="3.8" height="3.8" fill="none" stroke="#ff3030" stroke-width="1.1"/><polyline points="670.2,838.3 692.0,832.7 737.9,812.8 1046.0,692.2" fill="none" stroke="#3a3af5" stroke-width="1.05"/><path d="M668.2,839.9 L670.2,836.1 L672.2,839.9 Z" fill="#3a3af5" fill-opacity="0.5" stroke="#3a3af5" stroke-width="0.9"/><path d="M690.0,834.3 L692.0,830.5 L694.0,834.3 Z" fill="#3a3af5" fill-opacity="0.5" stroke="#3a3af5" stroke-width="0.9"/><path d="M735.9,814.4 L737.9,810.6 L739.9,814.4 Z" fill="#3a3af5" fill-opacity="0.5" stroke="#3a3af5" stroke-width="0.9"/><path d="M1044.0,693.8 L1046.0,690.0 L1048.0,693.8 Z" fill="#3a3af5" fill-opacity="0.5" stroke="#3a3af5" stroke-width="0.9"/><rect x="668.3" y="838.3" width="3.8" height="3.8" fill="none" stroke="#3a3af5" stroke-width="1.1"/><rect x="690.1" y="831.1" width="3.8" height="3.8" fill="none" stroke="#3a3af5" stroke-width="1.1"/><rect x="736.0" y="811.6" width="3.8" height="3.8" fill="none" stroke="#3a3af5" stroke-width="1.1"/><rect x="1044.1" y="690.3" width="3.8" height="3.8" fill="none" stroke="#3a3af5" stroke-width="1.1"/><rect x="1044.1" y="686.5" width="3.8" height="3.8" fill="none" stroke="#ff40ff" stroke-width="1.1"/><polyline points="670.2,835.9 692.0,829.8 737.9,809.0 785.9,782.6 857.9,742.5 1046.0,679.0" fill="none" stroke="#30e830" stroke-width="1.05"/><path d="M668.2,837.5 L670.2,833.7 L672.2,837.5 Z" fill="#30e830" fill-opacity="0.5" stroke="#30e830" stroke-width="0.9"/><path d="M690.0,831.4 L692.0,827.6 L694.0,831.4 Z" fill="#30e830" fill-opacity="0.5" stroke="#30e830" stroke-width="0.9"/><path d="M735.9,810.6 L737.9,806.8 L739.9,810.6 Z" fill="#30e830" fill-opacity="0.5" stroke="#30e830" stroke-width="0.9"/><path d="M783.9,784.2 L785.9,780.4 L787.9,784.2 Z" fill="#30e830" fill-opacity="0.5" stroke="#30e830" stroke-width="0.9"/><path d="M855.9,744.1 L857.9,740.3 L859.9,744.1 Z" fill="#30e830" fill-opacity="0.5" stroke="#30e830" stroke-width="0.9"/><path d="M1044.0,680.6 L1046.0,676.8 L1048.0,680.6 Z" fill="#30e830" fill-opacity="0.5" stroke="#30e830" stroke-width="0.9"/><rect x="668.3" y="835.1" width="3.8" height="3.8" fill="none" stroke="#30e830" stroke-width="1.1"/><rect x="690.1" y="829.1" width="3.8" height="3.8" fill="none" stroke="#30e830" stroke-width="1.1"/><rect x="736.0" y="808.1" width="3.8" height="3.8" fill="none" stroke="#30e830" stroke-width="1.1"/><rect x="784.0" y="780.7" width="3.8" height="3.8" fill="none" stroke="#30e830" stroke-width="1.1"/><rect x="856.0" y="740.6" width="3.8" height="3.8" fill="none" stroke="#30e830" stroke-width="1.1"/><rect x="1044.1" y="681.9" width="3.8" height="3.8" fill="none" stroke="#30e830" stroke-width="1.1"/><path d="M890.5,338.5 L890.5,351.5 L893.2,348.9 L895.4,353.8 L897.5,352.8 L895.3,348 L899,348 Z" fill="#fff" stroke="#1a1a1a" stroke-width="1" stroke-linejoin="round"/></svg>
</body></html>
